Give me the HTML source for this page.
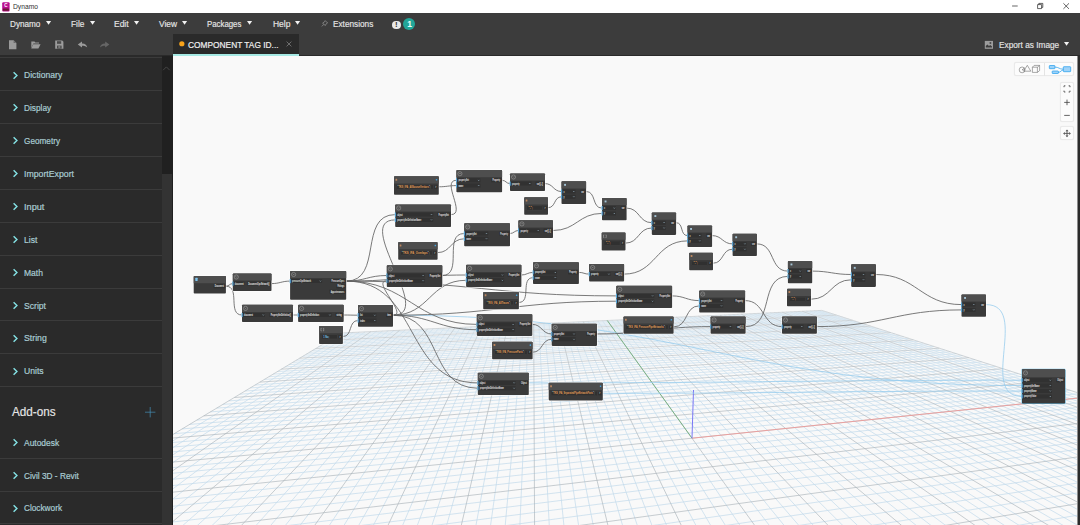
<!DOCTYPE html><html lang="en"><head><meta charset="utf-8"><title>Dynamo</title><style>
*{box-sizing:border-box;margin:0;padding:0}
html,body{width:1080px;height:525px;overflow:hidden;background:#f9f9f9;font-family:"Liberation Sans",sans-serif}
.t{position:absolute;white-space:nowrap;transform-origin:0 50%;display:inline-block;font-family:"Liberation Sans",sans-serif}
#app{position:relative;width:1080px;height:525px;overflow:hidden}
#titlebar{position:absolute;left:0;top:0;width:1080px;height:13px;background:#fff}
#menubar{position:absolute;left:0;top:13px;width:1080px;height:21px;background:#3c3c3c}
#toolbar{position:absolute;left:0;top:34px;width:1080px;height:22px;background:#3c3c3c;border-bottom:1px solid #2a2a2a}
#tab{position:absolute;left:173px;top:34px;width:126px;height:22px;background:#2a2a2a;border-bottom:2px solid #a6e9e4}
#sidebar{position:absolute;left:0;top:56px;width:162px;height:469px;background:#2a2a2a}
#scroll{position:absolute;left:161.5px;top:56px;width:11.5px;height:469px;background:#202020}
#thumb{position:absolute;left:161.5px;top:173.5px;width:10.8px;height:352px;background:#333}
#canvas{position:absolute;left:173px;top:56px;width:907px;height:469px;background:#f9f9f9;overflow:hidden}
#rborder{position:absolute;left:1077px;top:56px;width:3px;height:469px;background:#2b2b2b;border-left:1px solid #8c8c8c}
.sep{position:absolute;left:0;width:162px;height:1px;background:#3b3b3b}
.arr{position:absolute;width:0;height:0;border-left:2.6px solid transparent;border-right:2.6px solid transparent;border-top:3.6px solid #f4f4f4}
.box{position:absolute;background:#fcfcfc;border:1px solid #eaeaea;border-radius:2px;box-shadow:0 0 1px rgba(0,0,0,.08)}
svg{position:absolute;overflow:visible}
</style></head><body><div id="app">
<div id="canvas">
<svg style="left:-173px;top:-56px" width="1080" height="525" viewBox="0 0 1080 525" font-family="Liberation Sans, sans-serif">
<defs><linearGradient id="fog" x1="0" y1="0" x2="0" y2="1"><stop offset="0" stop-color="#f9f9f9" stop-opacity="0.32"/><stop offset="1" stop-color="#f9f9f9" stop-opacity="0"/></linearGradient><clipPath id="cv"><rect x="173" y="56" width="907" height="469"/></clipPath></defs>
<g clip-path="url(#cv)">
<path d="M-3924.3 2979.5L347.4 332.7M8273.7 2971.1L6846.6 2248.9M-3792.8 2979.4L353.4 332.4M7617.3 2971.5L5746.9 1895.1M-3661.4 2979.3L359.2 332.2M6961.0 2972.0L4973.5 1646.2M-3529.9 2979.2L365.1 331.9M6304.6 2972.4L4399.9 1461.7M-3267.0 2979.0L376.7 331.3M4991.9 2973.3L3606.0 1206.2M-3135.6 2978.9L382.5 331.1M4335.5 2973.8L3319.9 1114.2M-3004.1 2978.8L388.2 330.8M3679.1 2974.2L3082.5 1037.8M-2872.7 2978.8L393.9 330.5M3022.8 2974.7L2882.5 973.4M-2609.8 2978.6L405.3 330.0M1710.1 2975.6L2563.7 870.9M-2478.3 2978.5L410.9 329.7M1053.7 2976.0L2434.7 829.4M-2346.9 2978.4L416.5 329.5M397.3 2976.5L2321.2 792.8M-2215.4 2978.3L422.1 329.2M-259.0 2977.0L2220.4 760.4M-1952.5 2978.1L433.2 328.7M-1571.8 2977.9L2049.4 705.4M-1821.1 2978.0L438.7 328.4M-2228.1 2978.3L1976.3 681.9M-1689.6 2977.9L444.2 328.2M-2884.5 2978.8L1910.0 660.5M-1558.2 2977.8L449.7 327.9M-3540.9 2979.2L1849.4 641.1M-1295.3 2977.7L460.5 327.4M-2872.3 2267.3L1743.0 606.8M-1163.8 2977.6L465.9 327.1M-2276.3 1908.6L1696.0 591.7M-1032.4 2977.5L471.3 326.9M-1857.8 1656.7L1652.6 577.7M-900.9 2977.4L476.6 326.6M-1547.8 1470.1L1612.2 564.7M-638.0 2977.2L487.2 326.1M-1119.4 1212.2L1539.7 541.4M-506.6 2977.1L492.5 325.9M-965.1 1119.4L1506.9 530.8M-375.1 2977.0L497.7 325.6M-837.2 1042.4L1476.2 521.0M-243.7 2976.9L502.9 325.4M-729.4 977.5L1447.4 511.7M19.2 2976.8L513.3 324.9M-557.8 874.2L1394.8 494.8M150.7 2976.7L518.4 324.7M-488.3 832.4L1370.7 487.0M282.2 2976.6L523.5 324.4M-427.2 795.7L1347.9 479.7M413.6 2976.5L528.6 324.2M-373.0 763.0L1326.3 472.7M676.5 2976.3L538.8 323.7M-281.0 707.7L1286.4 459.9M808.0 2976.2L543.8 323.5M-241.7 684.0L1267.9 454.0M939.4 2976.1L548.8 323.2M-206.0 662.5L1250.3 448.3M1070.9 2976.0L553.8 323.0M-173.5 643.0L1233.6 442.9M1333.8 2975.9L563.7 322.5M-116.3 608.5L1202.2 432.8M1465.2 2975.8L568.7 322.3M-91.0 593.3L1187.6 428.1M1596.7 2975.7L573.6 322.1M-67.7 579.3L1173.6 423.6M1728.1 2975.6L578.4 321.8M-46.0 566.2L1160.2 419.3M1991.0 2975.4L588.1 321.4M-7.0 542.7L1135.0 411.2M2122.5 2975.3L593.0 321.2M10.6 532.2L1123.1 407.4M2253.9 2975.2L597.8 320.9M27.1 522.2L1111.7 403.7M2385.4 2975.1L602.5 320.7M42.6 512.9L1100.8 400.2M2648.3 2974.9L612.0 320.3M70.8 495.9L1080.0 393.5M2779.7 2974.9L616.8 320.0M83.8 488.1L1070.2 390.3M2911.2 2974.8L621.5 319.8M96.0 480.7L1060.8 387.3M3042.6 2974.7L626.1 319.6M107.6 473.8L1051.6 384.4M3305.5 2974.5L635.4 319.2M129.0 460.9L1034.3 378.8M3437.0 2974.4L640.0 318.9M139.0 454.9L1026.0 376.1M3568.4 2974.3L644.6 318.7M148.4 449.2L1018.0 373.6M3699.9 2974.2L649.2 318.5M157.4 443.8L1010.3 371.1M3962.8 2974.0L658.3 318.1M174.2 433.7L995.6 366.3M4094.2 2974.0L662.9 317.9M182.1 428.9L988.6 364.1M4225.7 2973.9L667.4 317.7M189.6 424.4L981.7 361.9M4357.1 2973.8L671.8 317.5M196.8 420.1L975.1 359.7M4620.0 2973.6L680.8 317.0M210.4 411.9L962.4 355.7M4751.5 2973.5L685.2 316.8M216.7 408.1L956.4 353.7M4882.9 2973.4L689.6 316.6M222.8 404.4L950.5 351.8M5014.4 2973.3L694.0 316.4M228.7 400.9L944.7 350.0M5277.3 2973.1L702.7 316.0M239.9 394.2L933.7 346.4M5408.7 2973.0L707.1 315.8M245.1 391.0L928.4 344.7M5540.2 2973.0L711.4 315.6M250.2 387.9L923.3 343.1M5671.6 2972.9L715.7 315.4M255.1 385.0L918.3 341.4M5934.5 2972.7L724.2 315.0M264.4 379.4L908.6 338.3M6066.0 2972.6L728.5 314.8M268.9 376.7L904.0 336.8M6197.4 2972.5L732.7 314.6M273.1 374.1L899.4 335.4M6328.9 2972.4L737.0 314.4M277.3 371.6L895.0 334.0M6591.8 2972.2L745.3 314.0M285.2 366.9L886.5 331.2M6723.2 2972.1L749.5 313.8M289.0 364.6L882.4 329.9M6854.7 2972.1L753.7 313.6M292.6 362.4L878.3 328.6M6986.1 2972.0L757.8 313.4M296.2 360.3L874.4 327.3M7249.0 2971.8L766.0 313.0M303.0 356.2L866.8 324.9M7380.5 2971.7L770.1 312.8M306.3 354.2L863.1 323.7M7511.9 2971.6L774.2 312.6M309.4 352.3L859.5 322.5M7643.4 2971.5L778.2 312.5M312.5 350.4L856.0 321.4M7906.3 2971.3L786.3 312.1M318.4 346.9L849.2 319.2M8037.7 2971.2L790.3 311.9M321.2 345.2L845.9 318.2M8169.2 2971.1L794.3 311.7M324.0 343.5L842.7 317.1M8300.6 2971.1L798.3 311.5M326.7 341.9L839.5 316.1M8563.5 2970.9L806.2 311.1M331.9 338.8L833.4 314.1M8695.0 2970.8L810.1 311.0M334.4 337.3L830.4 313.2M8826.4 2970.7L814.0 310.8M336.8 335.8L827.5 312.2M8857.0 2937.6L817.9 310.6M339.2 334.4L824.6 311.3" stroke="#c2daeb" stroke-width="0.7" fill="none"/>
<path d="M-4055.7 2979.6L341.5 333.0M8930.1 2970.6L8534.3 2791.9M-3398.5 2979.1L370.9 331.6M5648.2 2972.9L3957.5 1319.3M-2741.2 2978.7L399.6 330.3M2366.4 2975.1L2711.5 918.4M-2084.0 2978.2L427.7 328.9M-915.4 2977.4L2130.4 731.4M-1426.7 2977.8L455.1 327.6M-3789.3 2819.2L1794.0 623.2M-769.5 2977.3L481.9 326.4M-1309.0 1326.4L1574.7 552.6M-112.2 2976.9L508.1 325.2M-637.3 922.1L1420.3 503.0M545.1 2976.4L533.7 323.9M-324.6 733.9L1305.9 466.2M1202.3 2975.9L558.8 322.8M-143.7 625.0L1217.5 437.7M1859.6 2975.5L583.3 321.6M-25.8 554.1L1147.3 415.2M2516.8 2975.0L607.3 320.5M57.1 504.2L1090.2 396.8M3174.1 2974.6L630.8 319.4M118.6 467.1L1042.8 381.5M3831.3 2974.1L653.8 318.3M166.0 438.6L1002.8 368.7M4488.6 2973.7L676.3 317.2M203.7 415.9L968.7 357.7M5145.8 2973.2L698.4 316.2M234.4 397.5L939.2 348.2M5803.1 2972.8L720.0 315.2M259.9 382.1L913.4 339.9M6460.3 2972.3L741.2 314.2M281.3 369.2L890.7 332.6M7117.6 2971.9L761.9 313.2M299.6 358.2L870.6 326.1M7774.8 2971.4L782.3 312.3M315.5 348.6L852.6 320.3M8432.1 2971.0L802.2 311.3M329.3 340.3L836.4 315.1M8534.3 2791.9L821.8 310.4M341.5 333.0L821.8 310.4" stroke="#aab4ba" stroke-width="0.65" fill="none"/>
<rect x="173" y="300" width="907" height="125" fill="url(#fog)"/>
<path d="M692.0 438.2L1090.2 396.8" stroke="#f29492" stroke-width="0.8"/>
<path d="M692.0 438.2L607.3 320.5" stroke="#66aa70" stroke-width="0.8"/>
<path d="M692.0 438.2L693.5 390" stroke="#7a78f5" stroke-width="1"/>
<path d="M528.8 382.9C750.7 382.9 800.1 380.2 1022.0 380.2M393.0 315.2C677.8 315.2 737.2 385.6 1022.0 385.6M602.8 393.3C791.4 393.3 833.4 391.0 1022.0 391.0M986.0 304.6C1030.4 304.6 977.6 396.4 1022.0 396.4" stroke="#98cdee" stroke-width="0.8" fill="none"/>
<path d="M225.9 286.2C229.2 286.2 229.5 283.6 232.8 283.6M225.9 286.2C240.7 286.2 227.2 315.0 242.0 315.0M271.5 283.6C279.9 283.6 281.7 281.1 290.1 281.1M293.0 315.0C295.3 315.0 295.8 315.0 298.1 315.0M343.7 315.0C350.1 315.0 351.6 315.2 358.0 315.2M342.9 336.5C352.8 336.5 348.1 320.5 358.0 320.5M438.8 186.8C446.7 186.8 448.5 185.6 456.4 185.6M451.0 214.6C466.6 214.6 440.8 180.3 456.4 180.3M502.1 180.3C506.0 180.3 506.1 183.6 510.0 183.6M545.0 183.6C553.2 183.6 553.3 191.5 561.5 191.5M548.0 207.7C555.8 207.7 553.7 196.8 561.5 196.8M586.1 191.5C596.4 191.5 591.7 208.1 602.0 208.1M553.0 230.5C576.4 230.5 578.6 213.4 602.0 213.4M437.6 252.6C451.1 252.6 450.7 238.8 464.2 238.8M442.3 275.5C463.6 275.5 442.9 233.5 464.2 233.5M510.0 233.5C514.0 233.5 514.4 230.5 518.4 230.5M626.6 208.1C639.7 208.1 638.7 222.7 651.8 222.7M625.5 243.1C639.1 243.1 638.2 228.0 651.8 228.0M676.1 222.7C683.8 222.7 679.8 235.6 687.5 235.6M624.1 274.1C656.3 274.1 655.3 240.9 687.5 240.9M712.1 235.6C722.1 235.6 722.6 243.9 732.6 243.9M713.0 263.2C723.8 263.2 721.8 249.2 732.6 249.2M756.9 243.9C775.5 243.9 769.3 271.1 787.9 271.1M745.6 326.6C775.1 326.6 758.4 276.4 787.9 276.4M812.2 271.1C829.8 271.1 833.6 274.5 851.2 274.5M811.0 299.2C831.1 299.2 831.1 279.8 851.2 279.8M875.9 274.5C916.7 274.5 920.7 304.6 961.5 304.6M816.9 326.6C882.4 326.6 896.0 309.9 961.5 309.9M745.1 300.6C765.4 300.6 761.7 326.6 782.0 326.6M521.4 275.0C526.7 275.0 527.7 272.4 533.0 272.4M518.9 302.4C531.7 302.4 520.2 277.7 533.0 277.7M578.9 272.4C583.6 272.4 584.4 274.1 589.1 274.1M672.1 295.9C684.5 295.9 686.8 300.6 699.2 300.6M673.6 326.9C688.5 326.9 684.3 305.9 699.2 305.9M532.3 324.4C542.0 324.4 542.0 334.0 551.7 334.0M532.6 352.2C543.0 352.2 541.3 339.3 551.7 339.3M597.0 334.0C648.2 334.0 659.4 326.6 710.6 326.6M346.2 281.1C383.4 281.1 358.0 214.6 395.2 214.6M346.2 281.1C364.6 281.1 368.4 275.5 386.8 275.5M346.2 281.1C400.2 281.1 412.1 275.0 466.1 275.0M346.2 281.1C467.9 281.1 494.6 295.9 616.3 295.9M346.2 281.1C408.1 281.1 414.9 324.4 476.8 324.4M346.2 281.1C421.1 281.1 402.9 382.9 477.8 382.9M393.0 315.2C435.9 315.2 352.3 219.9 395.2 219.9M393.0 315.2C408.7 315.2 371.1 280.8 386.8 280.8M393.0 315.2C429.5 315.2 429.6 280.3 466.1 280.3M393.0 315.2C493.7 315.2 515.6 301.2 616.3 301.2M393.0 315.2C431.3 315.2 438.5 329.7 476.8 329.7M393.0 315.2C443.4 315.2 427.4 388.2 477.8 388.2" stroke="#626262" stroke-width="0.85" fill="none"/>
<g>
<rect x="193.2" y="275.5" width="33.2" height="18.5" rx="1.1" fill="#ffffff"/>
<rect x="193.7" y="276.0" width="32.2" height="17.5" rx="0.8" fill="#3a3a3a"/>
<path d="M193.7 283.2V276.8a0.8 0.8 0 0 1 0.8 -0.8H225.1a0.8 0.8 0 0 1 0.8 0.8V283.2z" fill="#4e4e4e"/>
<rect x="195.3" y="277.7" width="2.3" height="3.4" rx="0.5" fill="#7cc4ee"/>
<rect x="213.6" y="284.2" width="11.7" height="4.0" rx="0.6" fill="#313131"/>
<text x="223.90" y="287.20" font-size="2.55" fill="#ececec" text-anchor="end" font-weight="bold" textLength="9.10" lengthAdjust="spacingAndGlyphs">Document</text>
</g>
<g>
<rect x="232.3" y="272.9" width="39.7" height="18.6" rx="1.1" fill="#ffffff"/>
<rect x="232.8" y="273.4" width="38.7" height="17.6" rx="0.8" fill="#3a3a3a"/>
<path d="M232.8 280.6V274.2a0.8 0.8 0 0 1 0.8 -0.8H270.7a0.8 0.8 0 0 1 0.8 0.8V280.6z" fill="#4e4e4e"/>
<circle cx="236.3" cy="277.0" r="2.1" fill="none" stroke="#d0d0d0" stroke-width="0.35"/>
<path d="M235.4 276.4l0.9 0.9l0.9 -0.9" fill="none" stroke="#d0d0d0" stroke-width="0.35"/>
<rect x="232.8" y="281.6" width="11.5" height="4.0" rx="0.5" fill="#313131"/>
<rect x="232.4" y="281.5" width="1.1" height="4.2" fill="#55a9dc"/>
<text x="234.80" y="284.60" font-size="2.55" fill="#ececec" text-anchor="start" font-weight="bold" textLength="8.89" lengthAdjust="spacingAndGlyphs">document</text>
<rect x="247.0" y="281.6" width="23.9" height="4.0" rx="0.6" fill="#313131"/>
<text x="269.50" y="284.60" font-size="2.55" fill="#ececec" text-anchor="end" font-weight="bold" textLength="21.30" lengthAdjust="spacingAndGlyphs">DocumentOpsNetwork[]</text>
</g>
<g>
<rect x="289.6" y="270.4" width="57.1" height="29.8" rx="1.1" fill="#ffffff"/>
<rect x="290.1" y="270.9" width="56.1" height="28.8" rx="0.8" fill="#3a3a3a"/>
<path d="M290.1 278.1V271.7a0.8 0.8 0 0 1 0.8 -0.8H345.4a0.8 0.8 0 0 1 0.8 0.8V278.1z" fill="#4e4e4e"/>
<circle cx="293.6" cy="274.5" r="2.1" fill="none" stroke="#d0d0d0" stroke-width="0.35"/>
<path d="M292.7 273.9l0.9 0.9l0.9 -0.9" fill="none" stroke="#d0d0d0" stroke-width="0.35"/>
<rect x="290.1" y="279.1" width="32.0" height="4.0" rx="0.5" fill="#313131"/>
<rect x="289.7" y="279.0" width="1.1" height="4.2" fill="#55a9dc"/>
<text x="292.10" y="282.10" font-size="2.55" fill="#ececec" text-anchor="start" font-weight="bold" textLength="18.83" lengthAdjust="spacingAndGlyphs">pressureOpsNetwork</text>
<path d="M319.8 280.7l0.6 0.7l0.6 -0.7" fill="none" stroke="#b4d6ea" stroke-width="0.5"/>
<rect x="330.4" y="279.1" width="15.2" height="4.0" rx="0.6" fill="#313131"/>
<text x="344.20" y="282.10" font-size="2.55" fill="#ececec" text-anchor="end" font-weight="bold" textLength="12.62" lengthAdjust="spacingAndGlyphs">PressureOpes</text>
<rect x="336.3" y="284.4" width="9.3" height="4.0" rx="0.6" fill="#313131"/>
<text x="344.20" y="287.40" font-size="2.55" fill="#ececec" text-anchor="end" font-weight="bold" textLength="6.72" lengthAdjust="spacingAndGlyphs">Fittings</text>
<rect x="329.5" y="289.7" width="16.1" height="4.0" rx="0.6" fill="#313131"/>
<text x="344.20" y="292.70" font-size="2.55" fill="#ececec" text-anchor="end" font-weight="bold" textLength="13.55" lengthAdjust="spacingAndGlyphs">Appurtenances</text>
</g>
<g>
<rect x="241.5" y="304.3" width="52.0" height="18.2" rx="1.1" fill="#ffffff"/>
<rect x="242.0" y="304.8" width="51.0" height="17.2" rx="0.8" fill="#3a3a3a"/>
<path d="M242.0 312.0V305.6a0.8 0.8 0 0 1 0.8 -0.8H292.2a0.8 0.8 0 0 1 0.8 0.8V312.0z" fill="#4e4e4e"/>
<circle cx="245.5" cy="308.4" r="2.1" fill="none" stroke="#d0d0d0" stroke-width="0.35"/>
<path d="M244.6 307.8l0.9 0.9l0.9 -0.9" fill="none" stroke="#d0d0d0" stroke-width="0.35"/>
<rect x="242.0" y="313.0" width="23.0" height="4.0" rx="0.5" fill="#313131"/>
<rect x="241.6" y="312.9" width="1.1" height="4.2" fill="#55a9dc"/>
<text x="244.00" y="316.00" font-size="2.55" fill="#ececec" text-anchor="start" font-weight="bold" textLength="8.89" lengthAdjust="spacingAndGlyphs">document</text>
<path d="M262.7 314.6l0.6 0.7l0.6 -0.7" fill="none" stroke="#b4d6ea" stroke-width="0.5"/>
<rect x="269.4" y="313.0" width="23.0" height="4.0" rx="0.6" fill="#313131"/>
<text x="291.00" y="316.00" font-size="2.55" fill="#ececec" text-anchor="end" font-weight="bold" textLength="20.37" lengthAdjust="spacingAndGlyphs">PropertySetDefinition[]</text>
</g>
<g>
<rect x="297.6" y="304.3" width="46.6" height="18.2" rx="1.1" fill="#ffffff"/>
<rect x="298.1" y="304.8" width="45.6" height="17.2" rx="0.8" fill="#3a3a3a"/>
<path d="M298.1 312.0V305.6a0.8 0.8 0 0 1 0.8 -0.8H342.9a0.8 0.8 0 0 1 0.8 0.8V312.0z" fill="#4e4e4e"/>
<circle cx="301.6" cy="308.4" r="2.1" fill="none" stroke="#d0d0d0" stroke-width="0.35"/>
<path d="M300.7 307.8l0.9 0.9l0.9 -0.9" fill="none" stroke="#d0d0d0" stroke-width="0.35"/>
<rect x="298.1" y="313.0" width="33.5" height="4.0" rx="0.5" fill="#313131"/>
<rect x="297.7" y="312.9" width="1.1" height="4.2" fill="#55a9dc"/>
<text x="300.10" y="316.00" font-size="2.55" fill="#ececec" text-anchor="start" font-weight="bold" textLength="19.03" lengthAdjust="spacingAndGlyphs">propertySetDefinition</text>
<path d="M329.3 314.6l0.6 0.7l0.6 -0.7" fill="none" stroke="#b4d6ea" stroke-width="0.5"/>
<rect x="335.3" y="313.0" width="7.8" height="4.0" rx="0.6" fill="#313131"/>
<text x="341.70" y="316.00" font-size="2.55" fill="#ececec" text-anchor="end" font-weight="bold" textLength="5.17" lengthAdjust="spacingAndGlyphs">string</text>
</g>
<g>
<rect x="318.6" y="325.5" width="24.8" height="19.0" rx="1.1" fill="#ffffff"/>
<rect x="319.1" y="326.0" width="23.8" height="18.0" rx="0.8" fill="#3a3a3a"/>
<path d="M319.1 333.2V326.8a0.8 0.8 0 0 1 0.8 -0.8H342.1a0.8 0.8 0 0 1 0.8 0.8V333.2z" fill="#4e4e4e"/>
<path d="M321.7 328.3h-0.8v2.6h0.8 M322.9 328.3h0.8v2.6h-0.8" fill="none" stroke="#cfcfcf" stroke-width="0.4"/>
<rect x="321.5" y="334.5" width="16.0" height="4.4" rx="0.5" fill="#303030" stroke="#4b4b4b" stroke-width="0.3"/>
<text x="323.30" y="337.60" font-size="2.55" fill="#7cc4ee" font-weight="bold" textLength="6.00" lengthAdjust="spacingAndGlyphs">1 No;</text>
<rect x="338.3" y="335.0" width="3.4" height="3.4" rx="0.3" fill="#2f2f2f"/>
<text x="340.00" y="337.60" font-size="2.55" fill="#ddd" text-anchor="middle" font-weight="bold" textLength="1.09" lengthAdjust="spacingAndGlyphs">&gt;</text>
</g>
<g>
<rect x="357.5" y="304.5" width="36.0" height="22.8" rx="1.1" fill="#ffffff"/>
<rect x="358.0" y="305.0" width="35.0" height="21.8" rx="0.8" fill="#3a3a3a"/>
<path d="M358.0 312.2V305.8a0.8 0.8 0 0 1 0.8 -0.8H392.2a0.8 0.8 0 0 1 0.8 0.8V312.2z" fill="#4e4e4e"/>
<circle cx="361.5" cy="308.6" r="2.1" fill="none" stroke="#d0d0d0" stroke-width="0.35"/>
<path d="M360.6 308.0l0.9 0.9l0.9 -0.9" fill="none" stroke="#d0d0d0" stroke-width="0.35"/>
<rect x="358.0" y="313.2" width="18.5" height="4.0" rx="0.5" fill="#313131"/>
<rect x="357.6" y="313.1" width="1.1" height="4.2" fill="#55a9dc"/>
<text x="360.00" y="316.20" font-size="2.55" fill="#ececec" text-anchor="start" font-weight="bold" textLength="2.69" lengthAdjust="spacingAndGlyphs">list</text>
<path d="M374.2 314.8l0.6 0.7l0.6 -0.7" fill="none" stroke="#b4d6ea" stroke-width="0.5"/>
<rect x="358.0" y="318.5" width="18.5" height="4.0" rx="0.5" fill="#313131"/>
<rect x="357.6" y="318.4" width="1.1" height="4.2" fill="#55a9dc"/>
<text x="360.00" y="321.50" font-size="2.55" fill="#ececec" text-anchor="start" font-weight="bold" textLength="4.86" lengthAdjust="spacingAndGlyphs">index</text>
<path d="M374.2 320.1l0.6 0.7l0.6 -0.7" fill="none" stroke="#b4d6ea" stroke-width="0.5"/>
<rect x="386.0" y="313.2" width="6.4" height="4.0" rx="0.6" fill="#313131"/>
<text x="391.00" y="316.20" font-size="2.55" fill="#ececec" text-anchor="end" font-weight="bold" textLength="3.83" lengthAdjust="spacingAndGlyphs">item</text>
</g>
<g>
<rect x="393.5" y="175.8" width="45.8" height="19.4" rx="1.1" fill="#ffffff"/>
<rect x="394.0" y="176.3" width="44.8" height="18.4" rx="0.8" fill="#3a3a3a"/>
<path d="M394.0 183.5V177.1a0.8 0.8 0 0 1 0.8 -0.8H438.0a0.8 0.8 0 0 1 0.8 0.8V183.5z" fill="#4e4e4e"/>
<rect x="395.5" y="178.7" width="1.7" height="2.0" rx="0.3" fill="#c98d62" opacity="0.9"/>
<rect x="435.8" y="178.9" width="1.5" height="1.6" rx="0.4" fill="#45a0d8"/>
<rect x="396.4" y="184.8" width="37.0" height="4.4" rx="0.5" fill="#303030" stroke="#4b4b4b" stroke-width="0.3"/>
<text x="397.60" y="187.90" font-size="2.55" fill="#e6a05a" font-weight="bold" textLength="33.20" lengthAdjust="spacingAndGlyphs"><tspan fill="#9fc0d0">&quot;</tspan>TKS_IFA_AllSourceVertices<tspan fill="#a9bcc6">&quot;;</tspan></text>
<rect x="434.2" y="185.3" width="3.4" height="3.4" rx="0.3" fill="#2f2f2f"/>
<text x="435.90" y="187.90" font-size="2.55" fill="#ddd" text-anchor="middle" font-weight="bold" textLength="1.09" lengthAdjust="spacingAndGlyphs">&gt;</text>
</g>
<g>
<rect x="455.9" y="169.6" width="46.7" height="23.1" rx="1.1" fill="#ffffff"/>
<rect x="456.4" y="170.1" width="45.7" height="22.1" rx="0.8" fill="#3a3a3a"/>
<path d="M456.4 177.3V170.9a0.8 0.8 0 0 1 0.8 -0.8H501.3a0.8 0.8 0 0 1 0.8 0.8V177.3z" fill="#4e4e4e"/>
<circle cx="459.9" cy="173.7" r="2.1" fill="none" stroke="#d0d0d0" stroke-width="0.35"/>
<path d="M459.0 173.1l0.9 0.9l0.9 -0.9" fill="none" stroke="#d0d0d0" stroke-width="0.35"/>
<rect x="456.4" y="178.3" width="24.0" height="4.0" rx="0.5" fill="#313131"/>
<rect x="456.0" y="178.2" width="1.1" height="4.2" fill="#55a9dc"/>
<text x="458.40" y="181.30" font-size="2.55" fill="#ececec" text-anchor="start" font-weight="bold" textLength="10.45" lengthAdjust="spacingAndGlyphs">propertySet</text>
<path d="M478.1 179.9l0.6 0.7l0.6 -0.7" fill="none" stroke="#b4d6ea" stroke-width="0.5"/>
<rect x="456.4" y="183.6" width="24.0" height="4.0" rx="0.5" fill="#313131"/>
<rect x="456.0" y="183.5" width="1.1" height="4.2" fill="#55a9dc"/>
<text x="458.40" y="186.60" font-size="2.55" fill="#ececec" text-anchor="start" font-weight="bold" textLength="4.86" lengthAdjust="spacingAndGlyphs">name</text>
<path d="M478.1 185.2l0.6 0.7l0.6 -0.7" fill="none" stroke="#b4d6ea" stroke-width="0.5"/>
<rect x="491.2" y="178.3" width="10.3" height="4.0" rx="0.6" fill="#313131"/>
<text x="500.10" y="181.30" font-size="2.55" fill="#ececec" text-anchor="end" font-weight="bold" textLength="7.65" lengthAdjust="spacingAndGlyphs">Property</text>
</g>
<g>
<rect x="509.5" y="172.9" width="36.0" height="18.6" rx="1.1" fill="#ffffff"/>
<rect x="510.0" y="173.4" width="35.0" height="17.6" rx="0.8" fill="#3a3a3a"/>
<path d="M510.0 180.6V174.2a0.8 0.8 0 0 1 0.8 -0.8H544.2a0.8 0.8 0 0 1 0.8 0.8V180.6z" fill="#4e4e4e"/>
<circle cx="513.5" cy="177.0" r="2.1" fill="none" stroke="#d0d0d0" stroke-width="0.35"/>
<path d="M512.6 176.4l0.9 0.9l0.9 -0.9" fill="none" stroke="#d0d0d0" stroke-width="0.35"/>
<rect x="510.0" y="181.6" width="21.5" height="4.0" rx="0.5" fill="#313131"/>
<rect x="509.6" y="181.5" width="1.1" height="4.2" fill="#55a9dc"/>
<text x="512.00" y="184.60" font-size="2.55" fill="#ececec" text-anchor="start" font-weight="bold" textLength="7.55" lengthAdjust="spacingAndGlyphs">property</text>
<path d="M529.2 183.2l0.6 0.7l0.6 -0.7" fill="none" stroke="#b4d6ea" stroke-width="0.5"/>
<rect x="535.5" y="181.6" width="8.9" height="4.0" rx="0.6" fill="#313131"/>
<text x="543.00" y="184.60" font-size="2.55" fill="#ececec" text-anchor="end" font-weight="bold" textLength="6.31" lengthAdjust="spacingAndGlyphs">var[]..[]</text>
</g>
<g>
<rect x="523.7" y="196.7" width="24.8" height="18.6" rx="1.1" fill="#ffffff"/>
<rect x="524.2" y="197.2" width="23.8" height="17.6" rx="0.8" fill="#3a3a3a"/>
<path d="M524.2 204.4V198.0a0.8 0.8 0 0 1 0.8 -0.8H547.2a0.8 0.8 0 0 1 0.8 0.8V204.4z" fill="#4e4e4e"/>
<rect x="525.7" y="199.6" width="1.7" height="2.0" rx="0.3" fill="#c98d62" opacity="0.9"/>
<rect x="526.6" y="205.7" width="16.0" height="4.4" rx="0.5" fill="#303030" stroke="#4b4b4b" stroke-width="0.3"/>
<text x="528.40" y="208.80" font-size="2.55" fill="#e6a05a" font-weight="bold" textLength="4.40" lengthAdjust="spacingAndGlyphs">&quot;-&quot;;</text>
<rect x="543.4" y="206.2" width="3.4" height="3.4" rx="0.3" fill="#2f2f2f"/>
<text x="545.10" y="208.80" font-size="2.55" fill="#ddd" text-anchor="middle" font-weight="bold" textLength="1.09" lengthAdjust="spacingAndGlyphs">&gt;</text>
</g>
<g>
<rect x="394.7" y="203.9" width="56.8" height="23.6" rx="1.1" fill="#ffffff"/>
<rect x="395.2" y="204.4" width="55.8" height="22.6" rx="0.8" fill="#3a3a3a"/>
<path d="M395.2 211.6V205.2a0.8 0.8 0 0 1 0.8 -0.8H450.2a0.8 0.8 0 0 1 0.8 0.8V211.6z" fill="#4e4e4e"/>
<circle cx="398.7" cy="208.0" r="2.1" fill="none" stroke="#d0d0d0" stroke-width="0.35"/>
<path d="M397.8 207.4l0.9 0.9l0.9 -0.9" fill="none" stroke="#d0d0d0" stroke-width="0.35"/>
<rect x="395.2" y="212.6" width="38.0" height="4.0" rx="0.5" fill="#313131"/>
<rect x="394.8" y="212.5" width="1.1" height="4.2" fill="#55a9dc"/>
<text x="397.20" y="215.60" font-size="2.55" fill="#ececec" text-anchor="start" font-weight="bold" textLength="5.48" lengthAdjust="spacingAndGlyphs">object</text>
<path d="M430.9 214.2l0.6 0.7l0.6 -0.7" fill="none" stroke="#b4d6ea" stroke-width="0.5"/>
<rect x="395.2" y="217.9" width="38.0" height="4.0" rx="0.5" fill="#313131"/>
<rect x="394.8" y="217.8" width="1.1" height="4.2" fill="#55a9dc"/>
<text x="397.20" y="220.90" font-size="2.55" fill="#ececec" text-anchor="start" font-weight="bold" textLength="24.10" lengthAdjust="spacingAndGlyphs">propertySetDefinitionName</text>
<path d="M430.9 219.5l0.6 0.7l0.6 -0.7" fill="none" stroke="#b4d6ea" stroke-width="0.5"/>
<rect x="437.2" y="212.6" width="13.2" height="4.0" rx="0.6" fill="#313131"/>
<text x="449.00" y="215.60" font-size="2.55" fill="#ececec" text-anchor="end" font-weight="bold" textLength="10.55" lengthAdjust="spacingAndGlyphs">PropertySet</text>
</g>
<g>
<rect x="463.7" y="222.8" width="46.8" height="24.0" rx="1.1" fill="#ffffff"/>
<rect x="464.2" y="223.3" width="45.8" height="23.0" rx="0.8" fill="#3a3a3a"/>
<path d="M464.2 230.5V224.1a0.8 0.8 0 0 1 0.8 -0.8H509.2a0.8 0.8 0 0 1 0.8 0.8V230.5z" fill="#4e4e4e"/>
<circle cx="467.7" cy="226.9" r="2.1" fill="none" stroke="#d0d0d0" stroke-width="0.35"/>
<path d="M466.8 226.3l0.9 0.9l0.9 -0.9" fill="none" stroke="#d0d0d0" stroke-width="0.35"/>
<rect x="464.2" y="231.5" width="24.0" height="4.0" rx="0.5" fill="#313131"/>
<rect x="463.8" y="231.4" width="1.1" height="4.2" fill="#55a9dc"/>
<text x="466.20" y="234.50" font-size="2.55" fill="#ececec" text-anchor="start" font-weight="bold" textLength="10.45" lengthAdjust="spacingAndGlyphs">propertySet</text>
<path d="M485.9 233.1l0.6 0.7l0.6 -0.7" fill="none" stroke="#b4d6ea" stroke-width="0.5"/>
<rect x="464.2" y="236.8" width="24.0" height="4.0" rx="0.5" fill="#313131"/>
<rect x="463.8" y="236.7" width="1.1" height="4.2" fill="#55a9dc"/>
<text x="466.20" y="239.80" font-size="2.55" fill="#ececec" text-anchor="start" font-weight="bold" textLength="4.86" lengthAdjust="spacingAndGlyphs">name</text>
<path d="M485.9 238.4l0.6 0.7l0.6 -0.7" fill="none" stroke="#b4d6ea" stroke-width="0.5"/>
<rect x="499.1" y="231.5" width="10.3" height="4.0" rx="0.6" fill="#313131"/>
<text x="508.00" y="234.50" font-size="2.55" fill="#ececec" text-anchor="end" font-weight="bold" textLength="7.65" lengthAdjust="spacingAndGlyphs">Property</text>
</g>
<g>
<rect x="517.9" y="219.8" width="35.6" height="18.7" rx="1.1" fill="#ffffff"/>
<rect x="518.4" y="220.3" width="34.6" height="17.7" rx="0.8" fill="#3a3a3a"/>
<path d="M518.4 227.5V221.1a0.8 0.8 0 0 1 0.8 -0.8H552.2a0.8 0.8 0 0 1 0.8 0.8V227.5z" fill="#4e4e4e"/>
<circle cx="521.9" cy="223.9" r="2.1" fill="none" stroke="#d0d0d0" stroke-width="0.35"/>
<path d="M521.0 223.3l0.9 0.9l0.9 -0.9" fill="none" stroke="#d0d0d0" stroke-width="0.35"/>
<rect x="518.4" y="228.5" width="21.5" height="4.0" rx="0.5" fill="#313131"/>
<rect x="518.0" y="228.4" width="1.1" height="4.2" fill="#55a9dc"/>
<text x="520.40" y="231.50" font-size="2.55" fill="#ececec" text-anchor="start" font-weight="bold" textLength="7.55" lengthAdjust="spacingAndGlyphs">property</text>
<path d="M537.6 230.1l0.6 0.7l0.6 -0.7" fill="none" stroke="#b4d6ea" stroke-width="0.5"/>
<rect x="543.5" y="228.5" width="8.9" height="4.0" rx="0.6" fill="#313131"/>
<text x="551.00" y="231.50" font-size="2.55" fill="#ececec" text-anchor="end" font-weight="bold" textLength="6.31" lengthAdjust="spacingAndGlyphs">var[]..[]</text>
</g>
<g>
<rect x="397.7" y="241.6" width="40.4" height="18.6" rx="1.1" fill="#ffffff"/>
<rect x="398.2" y="242.1" width="39.4" height="17.6" rx="0.8" fill="#3a3a3a"/>
<path d="M398.2 249.3V242.9a0.8 0.8 0 0 1 0.8 -0.8H436.8a0.8 0.8 0 0 1 0.8 0.8V249.3z" fill="#4e4e4e"/>
<rect x="399.7" y="244.5" width="1.7" height="2.0" rx="0.3" fill="#c98d62" opacity="0.9"/>
<rect x="434.6" y="244.7" width="1.5" height="1.6" rx="0.4" fill="#45a0d8"/>
<rect x="400.6" y="250.6" width="31.6" height="4.4" rx="0.5" fill="#303030" stroke="#4b4b4b" stroke-width="0.3"/>
<text x="401.80" y="253.70" font-size="2.55" fill="#e6a05a" font-weight="bold" textLength="27.80" lengthAdjust="spacingAndGlyphs"><tspan fill="#9fc0d0">&quot;</tspan>TKS_IFA_Overlaps<tspan fill="#a9bcc6">&quot;;</tspan></text>
<rect x="433.0" y="251.1" width="3.4" height="3.4" rx="0.3" fill="#2f2f2f"/>
<text x="434.70" y="253.70" font-size="2.55" fill="#ddd" text-anchor="middle" font-weight="bold" textLength="1.09" lengthAdjust="spacingAndGlyphs">&gt;</text>
</g>
<g>
<rect x="561.0" y="180.8" width="25.6" height="23.8" rx="1.1" fill="#ffffff"/>
<rect x="561.5" y="181.3" width="24.6" height="22.8" rx="0.8" fill="#3a3a3a"/>
<path d="M561.5 188.5V182.1a0.8 0.8 0 0 1 0.8 -0.8H585.3a0.8 0.8 0 0 1 0.8 0.8V188.5z" fill="#4e4e4e"/>
<rect x="564.1" y="183.9" width="1.9" height="1.9" fill="#b4d9ee" opacity="0.85"/>
<rect x="561.5" y="189.5" width="14.0" height="4.0" rx="0.5" fill="#313131"/>
<rect x="561.1" y="189.4" width="1.1" height="4.2" fill="#55a9dc"/>
<text x="563.50" y="192.50" font-size="2.55" fill="#ececec" text-anchor="start" font-weight="bold" textLength="1.04" lengthAdjust="spacingAndGlyphs">x</text>
<path d="M573.2 191.1l0.6 0.7l0.6 -0.7" fill="none" stroke="#b4d6ea" stroke-width="0.5"/>
<rect x="561.5" y="194.8" width="14.0" height="4.0" rx="0.5" fill="#313131"/>
<rect x="561.1" y="194.7" width="1.1" height="4.2" fill="#55a9dc"/>
<text x="563.50" y="197.80" font-size="2.55" fill="#ececec" text-anchor="start" font-weight="bold" textLength="1.04" lengthAdjust="spacingAndGlyphs">y</text>
<path d="M573.2 196.4l0.6 0.7l0.6 -0.7" fill="none" stroke="#b4d6ea" stroke-width="0.5"/>
<rect x="580.1" y="189.5" width="5.4" height="4.0" rx="0.6" fill="#313131"/>
<text x="584.10" y="192.50" font-size="2.55" fill="#ececec" text-anchor="end" font-weight="bold" textLength="2.79" lengthAdjust="spacingAndGlyphs">var</text>
</g>
<g>
<rect x="601.5" y="197.4" width="25.6" height="23.4" rx="1.1" fill="#ffffff"/>
<rect x="602.0" y="197.9" width="24.6" height="22.4" rx="0.8" fill="#3a3a3a"/>
<path d="M602.0 205.1V198.7a0.8 0.8 0 0 1 0.8 -0.8H625.8a0.8 0.8 0 0 1 0.8 0.8V205.1z" fill="#4e4e4e"/>
<rect x="604.6" y="200.5" width="1.9" height="1.9" fill="#b4d9ee" opacity="0.85"/>
<rect x="602.0" y="206.1" width="14.0" height="4.0" rx="0.5" fill="#313131"/>
<rect x="601.6" y="206.0" width="1.1" height="4.2" fill="#55a9dc"/>
<text x="604.00" y="209.10" font-size="2.55" fill="#ececec" text-anchor="start" font-weight="bold" textLength="1.04" lengthAdjust="spacingAndGlyphs">x</text>
<path d="M613.7 207.7l0.6 0.7l0.6 -0.7" fill="none" stroke="#b4d6ea" stroke-width="0.5"/>
<rect x="602.0" y="211.4" width="14.0" height="4.0" rx="0.5" fill="#313131"/>
<rect x="601.6" y="211.3" width="1.1" height="4.2" fill="#55a9dc"/>
<text x="604.00" y="214.40" font-size="2.55" fill="#ececec" text-anchor="start" font-weight="bold" textLength="1.04" lengthAdjust="spacingAndGlyphs">y</text>
<path d="M613.7 213.0l0.6 0.7l0.6 -0.7" fill="none" stroke="#b4d6ea" stroke-width="0.5"/>
<rect x="620.6" y="206.1" width="5.4" height="4.0" rx="0.6" fill="#313131"/>
<text x="624.60" y="209.10" font-size="2.55" fill="#ececec" text-anchor="end" font-weight="bold" textLength="2.79" lengthAdjust="spacingAndGlyphs">var</text>
</g>
<g>
<rect x="651.3" y="212.0" width="25.3" height="23.4" rx="1.1" fill="#ffffff"/>
<rect x="651.8" y="212.5" width="24.3" height="22.4" rx="0.8" fill="#3a3a3a"/>
<path d="M651.8 219.7V213.3a0.8 0.8 0 0 1 0.8 -0.8H675.3a0.8 0.8 0 0 1 0.8 0.8V219.7z" fill="#4e4e4e"/>
<rect x="654.4" y="215.1" width="1.9" height="1.9" fill="#b4d9ee" opacity="0.85"/>
<rect x="651.8" y="220.7" width="14.0" height="4.0" rx="0.5" fill="#313131"/>
<rect x="651.4" y="220.6" width="1.1" height="4.2" fill="#55a9dc"/>
<text x="653.80" y="223.70" font-size="2.55" fill="#ececec" text-anchor="start" font-weight="bold" textLength="1.04" lengthAdjust="spacingAndGlyphs">x</text>
<path d="M663.5 222.3l0.6 0.7l0.6 -0.7" fill="none" stroke="#b4d6ea" stroke-width="0.5"/>
<rect x="651.8" y="226.0" width="14.0" height="4.0" rx="0.5" fill="#313131"/>
<rect x="651.4" y="225.9" width="1.1" height="4.2" fill="#55a9dc"/>
<text x="653.80" y="229.00" font-size="2.55" fill="#ececec" text-anchor="start" font-weight="bold" textLength="1.04" lengthAdjust="spacingAndGlyphs">y</text>
<path d="M663.5 227.6l0.6 0.7l0.6 -0.7" fill="none" stroke="#b4d6ea" stroke-width="0.5"/>
<rect x="670.1" y="220.7" width="5.4" height="4.0" rx="0.6" fill="#313131"/>
<text x="674.10" y="223.70" font-size="2.55" fill="#ececec" text-anchor="end" font-weight="bold" textLength="2.79" lengthAdjust="spacingAndGlyphs">var</text>
</g>
<g>
<rect x="687.0" y="224.9" width="25.6" height="22.7" rx="1.1" fill="#ffffff"/>
<rect x="687.5" y="225.4" width="24.6" height="21.7" rx="0.8" fill="#3a3a3a"/>
<path d="M687.5 232.6V226.2a0.8 0.8 0 0 1 0.8 -0.8H711.3a0.8 0.8 0 0 1 0.8 0.8V232.6z" fill="#4e4e4e"/>
<rect x="690.1" y="228.0" width="1.9" height="1.9" fill="#b4d9ee" opacity="0.85"/>
<rect x="687.5" y="233.6" width="14.0" height="4.0" rx="0.5" fill="#313131"/>
<rect x="687.1" y="233.5" width="1.1" height="4.2" fill="#55a9dc"/>
<text x="689.50" y="236.60" font-size="2.55" fill="#ececec" text-anchor="start" font-weight="bold" textLength="1.04" lengthAdjust="spacingAndGlyphs">x</text>
<path d="M699.2 235.2l0.6 0.7l0.6 -0.7" fill="none" stroke="#b4d6ea" stroke-width="0.5"/>
<rect x="687.5" y="238.9" width="14.0" height="4.0" rx="0.5" fill="#313131"/>
<rect x="687.1" y="238.8" width="1.1" height="4.2" fill="#55a9dc"/>
<text x="689.50" y="241.90" font-size="2.55" fill="#ececec" text-anchor="start" font-weight="bold" textLength="1.04" lengthAdjust="spacingAndGlyphs">y</text>
<path d="M699.2 240.5l0.6 0.7l0.6 -0.7" fill="none" stroke="#b4d6ea" stroke-width="0.5"/>
<rect x="706.1" y="233.6" width="5.4" height="4.0" rx="0.6" fill="#313131"/>
<text x="710.10" y="236.60" font-size="2.55" fill="#ececec" text-anchor="end" font-weight="bold" textLength="2.79" lengthAdjust="spacingAndGlyphs">var</text>
</g>
<g>
<rect x="601.2" y="232.1" width="24.8" height="18.9" rx="1.1" fill="#ffffff"/>
<rect x="601.7" y="232.6" width="23.8" height="17.9" rx="0.8" fill="#3a3a3a"/>
<path d="M601.7 239.8V233.4a0.8 0.8 0 0 1 0.8 -0.8H624.7a0.8 0.8 0 0 1 0.8 0.8V239.8z" fill="#4e4e4e"/>
<path d="M604.3 234.9h-0.8v2.6h0.8 M605.5 234.9h0.8v2.6h-0.8" fill="none" stroke="#cfcfcf" stroke-width="0.4"/>
<rect x="604.1" y="241.1" width="16.0" height="4.4" rx="0.5" fill="#303030" stroke="#4b4b4b" stroke-width="0.3"/>
<text x="605.90" y="244.20" font-size="2.55" fill="#e6a05a" font-weight="bold" textLength="4.60" lengthAdjust="spacingAndGlyphs">&quot;-&quot;;</text>
<rect x="620.9" y="241.6" width="3.4" height="3.4" rx="0.3" fill="#2f2f2f"/>
<text x="622.60" y="244.20" font-size="2.55" fill="#ddd" text-anchor="middle" font-weight="bold" textLength="1.09" lengthAdjust="spacingAndGlyphs">&gt;</text>
</g>
<g>
<rect x="732.1" y="233.2" width="25.3" height="23.3" rx="1.1" fill="#ffffff"/>
<rect x="732.6" y="233.7" width="24.3" height="22.3" rx="0.8" fill="#3a3a3a"/>
<path d="M732.6 240.9V234.5a0.8 0.8 0 0 1 0.8 -0.8H756.1a0.8 0.8 0 0 1 0.8 0.8V240.9z" fill="#4e4e4e"/>
<rect x="735.2" y="236.3" width="1.9" height="1.9" fill="#b4d9ee" opacity="0.85"/>
<rect x="732.6" y="241.9" width="14.0" height="4.0" rx="0.5" fill="#313131"/>
<rect x="732.2" y="241.8" width="1.1" height="4.2" fill="#55a9dc"/>
<text x="734.60" y="244.90" font-size="2.55" fill="#ececec" text-anchor="start" font-weight="bold" textLength="1.04" lengthAdjust="spacingAndGlyphs">x</text>
<path d="M744.3 243.5l0.6 0.7l0.6 -0.7" fill="none" stroke="#b4d6ea" stroke-width="0.5"/>
<rect x="732.6" y="247.2" width="14.0" height="4.0" rx="0.5" fill="#313131"/>
<rect x="732.2" y="247.1" width="1.1" height="4.2" fill="#55a9dc"/>
<text x="734.60" y="250.20" font-size="2.55" fill="#ececec" text-anchor="start" font-weight="bold" textLength="1.04" lengthAdjust="spacingAndGlyphs">y</text>
<path d="M744.3 248.8l0.6 0.7l0.6 -0.7" fill="none" stroke="#b4d6ea" stroke-width="0.5"/>
<rect x="750.9" y="241.9" width="5.4" height="4.0" rx="0.6" fill="#313131"/>
<text x="754.90" y="244.90" font-size="2.55" fill="#ececec" text-anchor="end" font-weight="bold" textLength="2.79" lengthAdjust="spacingAndGlyphs">var</text>
</g>
<g>
<rect x="386.3" y="264.8" width="56.5" height="22.7" rx="1.1" fill="#ffffff"/>
<rect x="386.8" y="265.3" width="55.5" height="21.7" rx="0.8" fill="#3a3a3a"/>
<path d="M386.8 272.5V266.1a0.8 0.8 0 0 1 0.8 -0.8H441.5a0.8 0.8 0 0 1 0.8 0.8V272.5z" fill="#4e4e4e"/>
<circle cx="390.3" cy="268.9" r="2.1" fill="none" stroke="#d0d0d0" stroke-width="0.35"/>
<path d="M389.4 268.3l0.9 0.9l0.9 -0.9" fill="none" stroke="#d0d0d0" stroke-width="0.35"/>
<rect x="386.8" y="273.5" width="38.0" height="4.0" rx="0.5" fill="#313131"/>
<rect x="386.4" y="273.4" width="1.1" height="4.2" fill="#55a9dc"/>
<text x="388.80" y="276.50" font-size="2.55" fill="#ececec" text-anchor="start" font-weight="bold" textLength="5.48" lengthAdjust="spacingAndGlyphs">object</text>
<path d="M422.5 275.1l0.6 0.7l0.6 -0.7" fill="none" stroke="#b4d6ea" stroke-width="0.5"/>
<rect x="386.8" y="278.8" width="38.0" height="4.0" rx="0.5" fill="#313131"/>
<rect x="386.4" y="278.7" width="1.1" height="4.2" fill="#55a9dc"/>
<text x="388.80" y="281.80" font-size="2.55" fill="#ececec" text-anchor="start" font-weight="bold" textLength="24.10" lengthAdjust="spacingAndGlyphs">propertySetDefinitionName</text>
<path d="M422.5 280.4l0.6 0.7l0.6 -0.7" fill="none" stroke="#b4d6ea" stroke-width="0.5"/>
<rect x="428.5" y="273.5" width="13.2" height="4.0" rx="0.6" fill="#313131"/>
<text x="440.30" y="276.50" font-size="2.55" fill="#ececec" text-anchor="end" font-weight="bold" textLength="10.55" lengthAdjust="spacingAndGlyphs">PropertySet</text>
</g>
<g>
<rect x="465.6" y="264.3" width="56.3" height="23.2" rx="1.1" fill="#ffffff"/>
<rect x="466.1" y="264.8" width="55.3" height="22.2" rx="0.8" fill="#3a3a3a"/>
<path d="M466.1 272.0V265.6a0.8 0.8 0 0 1 0.8 -0.8H520.6a0.8 0.8 0 0 1 0.8 0.8V272.0z" fill="#4e4e4e"/>
<circle cx="469.6" cy="268.4" r="2.1" fill="none" stroke="#d0d0d0" stroke-width="0.35"/>
<path d="M468.7 267.8l0.9 0.9l0.9 -0.9" fill="none" stroke="#d0d0d0" stroke-width="0.35"/>
<rect x="466.1" y="273.0" width="38.0" height="4.0" rx="0.5" fill="#313131"/>
<rect x="465.7" y="272.9" width="1.1" height="4.2" fill="#55a9dc"/>
<text x="468.10" y="276.00" font-size="2.55" fill="#ececec" text-anchor="start" font-weight="bold" textLength="5.48" lengthAdjust="spacingAndGlyphs">object</text>
<path d="M501.8 274.6l0.6 0.7l0.6 -0.7" fill="none" stroke="#b4d6ea" stroke-width="0.5"/>
<rect x="466.1" y="278.3" width="38.0" height="4.0" rx="0.5" fill="#313131"/>
<rect x="465.7" y="278.2" width="1.1" height="4.2" fill="#55a9dc"/>
<text x="468.10" y="281.30" font-size="2.55" fill="#ececec" text-anchor="start" font-weight="bold" textLength="24.10" lengthAdjust="spacingAndGlyphs">propertySetDefinitionName</text>
<path d="M501.8 279.9l0.6 0.7l0.6 -0.7" fill="none" stroke="#b4d6ea" stroke-width="0.5"/>
<rect x="507.6" y="273.0" width="13.2" height="4.0" rx="0.6" fill="#313131"/>
<text x="519.40" y="276.00" font-size="2.55" fill="#ececec" text-anchor="end" font-weight="bold" textLength="10.55" lengthAdjust="spacingAndGlyphs">PropertySet</text>
</g>
<g>
<rect x="532.5" y="261.7" width="46.9" height="22.8" rx="1.1" fill="#ffffff"/>
<rect x="533.0" y="262.2" width="45.9" height="21.8" rx="0.8" fill="#3a3a3a"/>
<path d="M533.0 269.4V263.0a0.8 0.8 0 0 1 0.8 -0.8H578.1a0.8 0.8 0 0 1 0.8 0.8V269.4z" fill="#4e4e4e"/>
<circle cx="536.5" cy="265.8" r="2.1" fill="none" stroke="#d0d0d0" stroke-width="0.35"/>
<path d="M535.6 265.2l0.9 0.9l0.9 -0.9" fill="none" stroke="#d0d0d0" stroke-width="0.35"/>
<rect x="533.0" y="270.4" width="24.0" height="4.0" rx="0.5" fill="#313131"/>
<rect x="532.6" y="270.3" width="1.1" height="4.2" fill="#55a9dc"/>
<text x="535.00" y="273.40" font-size="2.55" fill="#ececec" text-anchor="start" font-weight="bold" textLength="10.45" lengthAdjust="spacingAndGlyphs">propertySet</text>
<path d="M554.7 272.0l0.6 0.7l0.6 -0.7" fill="none" stroke="#b4d6ea" stroke-width="0.5"/>
<rect x="533.0" y="275.7" width="24.0" height="4.0" rx="0.5" fill="#313131"/>
<rect x="532.6" y="275.6" width="1.1" height="4.2" fill="#55a9dc"/>
<text x="535.00" y="278.70" font-size="2.55" fill="#ececec" text-anchor="start" font-weight="bold" textLength="4.86" lengthAdjust="spacingAndGlyphs">name</text>
<path d="M554.7 277.3l0.6 0.7l0.6 -0.7" fill="none" stroke="#b4d6ea" stroke-width="0.5"/>
<rect x="568.0" y="270.4" width="10.3" height="4.0" rx="0.6" fill="#313131"/>
<text x="576.90" y="273.40" font-size="2.55" fill="#ececec" text-anchor="end" font-weight="bold" textLength="7.65" lengthAdjust="spacingAndGlyphs">Property</text>
</g>
<g>
<rect x="482.7" y="291.4" width="36.7" height="18.3" rx="1.1" fill="#ffffff"/>
<rect x="483.2" y="291.9" width="35.7" height="17.3" rx="0.8" fill="#3a3a3a"/>
<path d="M483.2 299.1V292.7a0.8 0.8 0 0 1 0.8 -0.8H518.1a0.8 0.8 0 0 1 0.8 0.8V299.1z" fill="#4e4e4e"/>
<rect x="484.7" y="294.3" width="1.7" height="2.0" rx="0.3" fill="#c98d62" opacity="0.9"/>
<rect x="515.9" y="294.5" width="1.5" height="1.6" rx="0.4" fill="#45a0d8"/>
<rect x="485.6" y="300.4" width="27.9" height="4.4" rx="0.5" fill="#303030" stroke="#4b4b4b" stroke-width="0.3"/>
<text x="486.80" y="303.50" font-size="2.55" fill="#e6a05a" font-weight="bold" textLength="24.10" lengthAdjust="spacingAndGlyphs"><tspan fill="#9fc0d0">&quot;</tspan>TKS_IFA_AllTraces<tspan fill="#a9bcc6">&quot;;</tspan></text>
<rect x="514.3" y="300.9" width="3.4" height="3.4" rx="0.3" fill="#2f2f2f"/>
<text x="516.00" y="303.50" font-size="2.55" fill="#ddd" text-anchor="middle" font-weight="bold" textLength="1.09" lengthAdjust="spacingAndGlyphs">&gt;</text>
</g>
<g>
<rect x="476.3" y="313.7" width="56.5" height="22.7" rx="1.1" fill="#ffffff"/>
<rect x="476.8" y="314.2" width="55.5" height="21.7" rx="0.8" fill="#3a3a3a"/>
<path d="M476.8 321.4V315.0a0.8 0.8 0 0 1 0.8 -0.8H531.5a0.8 0.8 0 0 1 0.8 0.8V321.4z" fill="#4e4e4e"/>
<circle cx="480.3" cy="317.8" r="2.1" fill="none" stroke="#d0d0d0" stroke-width="0.35"/>
<path d="M479.4 317.2l0.9 0.9l0.9 -0.9" fill="none" stroke="#d0d0d0" stroke-width="0.35"/>
<rect x="476.8" y="322.4" width="38.0" height="4.0" rx="0.5" fill="#313131"/>
<rect x="476.4" y="322.3" width="1.1" height="4.2" fill="#55a9dc"/>
<text x="478.80" y="325.40" font-size="2.55" fill="#ececec" text-anchor="start" font-weight="bold" textLength="5.48" lengthAdjust="spacingAndGlyphs">object</text>
<path d="M512.5 324.0l0.6 0.7l0.6 -0.7" fill="none" stroke="#b4d6ea" stroke-width="0.5"/>
<rect x="476.8" y="327.7" width="38.0" height="4.0" rx="0.5" fill="#313131"/>
<rect x="476.4" y="327.6" width="1.1" height="4.2" fill="#55a9dc"/>
<text x="478.80" y="330.70" font-size="2.55" fill="#ececec" text-anchor="start" font-weight="bold" textLength="24.10" lengthAdjust="spacingAndGlyphs">propertySetDefinitionName</text>
<path d="M512.5 329.3l0.6 0.7l0.6 -0.7" fill="none" stroke="#b4d6ea" stroke-width="0.5"/>
<rect x="518.5" y="322.4" width="13.2" height="4.0" rx="0.6" fill="#313131"/>
<text x="530.30" y="325.40" font-size="2.55" fill="#ececec" text-anchor="end" font-weight="bold" textLength="10.55" lengthAdjust="spacingAndGlyphs">PropertySet</text>
</g>
<g>
<rect x="588.6" y="263.4" width="36.0" height="18.6" rx="1.1" fill="#ffffff"/>
<rect x="589.1" y="263.9" width="35.0" height="17.6" rx="0.8" fill="#3a3a3a"/>
<path d="M589.1 271.1V264.7a0.8 0.8 0 0 1 0.8 -0.8H623.3a0.8 0.8 0 0 1 0.8 0.8V271.1z" fill="#4e4e4e"/>
<circle cx="592.6" cy="267.5" r="2.1" fill="none" stroke="#d0d0d0" stroke-width="0.35"/>
<path d="M591.7 266.9l0.9 0.9l0.9 -0.9" fill="none" stroke="#d0d0d0" stroke-width="0.35"/>
<rect x="589.1" y="272.1" width="21.5" height="4.0" rx="0.5" fill="#313131"/>
<rect x="588.7" y="272.0" width="1.1" height="4.2" fill="#55a9dc"/>
<text x="591.10" y="275.10" font-size="2.55" fill="#ececec" text-anchor="start" font-weight="bold" textLength="7.55" lengthAdjust="spacingAndGlyphs">property</text>
<path d="M608.3 273.7l0.6 0.7l0.6 -0.7" fill="none" stroke="#b4d6ea" stroke-width="0.5"/>
<rect x="614.6" y="272.1" width="8.9" height="4.0" rx="0.6" fill="#313131"/>
<text x="622.10" y="275.10" font-size="2.55" fill="#ececec" text-anchor="end" font-weight="bold" textLength="6.31" lengthAdjust="spacingAndGlyphs">var[]..[]</text>
</g>
<g>
<rect x="688.7" y="252.2" width="24.8" height="18.6" rx="1.1" fill="#ffffff"/>
<rect x="689.2" y="252.7" width="23.8" height="17.6" rx="0.8" fill="#3a3a3a"/>
<path d="M689.2 259.9V253.5a0.8 0.8 0 0 1 0.8 -0.8H712.2a0.8 0.8 0 0 1 0.8 0.8V259.9z" fill="#4e4e4e"/>
<rect x="690.7" y="255.1" width="1.7" height="2.0" rx="0.3" fill="#c98d62" opacity="0.9"/>
<rect x="691.6" y="261.2" width="16.0" height="4.4" rx="0.5" fill="#303030" stroke="#4b4b4b" stroke-width="0.3"/>
<text x="693.40" y="264.30" font-size="2.55" fill="#e6a05a" font-weight="bold" textLength="4.40" lengthAdjust="spacingAndGlyphs">&quot;-&quot;;</text>
<rect x="708.4" y="261.7" width="3.4" height="3.4" rx="0.3" fill="#2f2f2f"/>
<text x="710.10" y="264.30" font-size="2.55" fill="#ddd" text-anchor="middle" font-weight="bold" textLength="1.09" lengthAdjust="spacingAndGlyphs">&gt;</text>
</g>
<g>
<rect x="615.8" y="285.2" width="56.8" height="23.3" rx="1.1" fill="#ffffff"/>
<rect x="616.3" y="285.7" width="55.8" height="22.3" rx="0.8" fill="#3a3a3a"/>
<path d="M616.3 292.9V286.5a0.8 0.8 0 0 1 0.8 -0.8H671.3a0.8 0.8 0 0 1 0.8 0.8V292.9z" fill="#4e4e4e"/>
<circle cx="619.8" cy="289.3" r="2.1" fill="none" stroke="#d0d0d0" stroke-width="0.35"/>
<path d="M618.9 288.7l0.9 0.9l0.9 -0.9" fill="none" stroke="#d0d0d0" stroke-width="0.35"/>
<rect x="616.3" y="293.9" width="38.0" height="4.0" rx="0.5" fill="#313131"/>
<rect x="615.9" y="293.8" width="1.1" height="4.2" fill="#55a9dc"/>
<text x="618.30" y="296.90" font-size="2.55" fill="#ececec" text-anchor="start" font-weight="bold" textLength="5.48" lengthAdjust="spacingAndGlyphs">object</text>
<path d="M652.0 295.5l0.6 0.7l0.6 -0.7" fill="none" stroke="#b4d6ea" stroke-width="0.5"/>
<rect x="616.3" y="299.2" width="38.0" height="4.0" rx="0.5" fill="#313131"/>
<rect x="615.9" y="299.1" width="1.1" height="4.2" fill="#55a9dc"/>
<text x="618.30" y="302.20" font-size="2.55" fill="#ececec" text-anchor="start" font-weight="bold" textLength="24.10" lengthAdjust="spacingAndGlyphs">propertySetDefinitionName</text>
<path d="M652.0 300.8l0.6 0.7l0.6 -0.7" fill="none" stroke="#b4d6ea" stroke-width="0.5"/>
<rect x="658.3" y="293.9" width="13.2" height="4.0" rx="0.6" fill="#313131"/>
<text x="670.10" y="296.90" font-size="2.55" fill="#ececec" text-anchor="end" font-weight="bold" textLength="10.55" lengthAdjust="spacingAndGlyphs">PropertySet</text>
</g>
<g>
<rect x="698.7" y="289.9" width="46.9" height="23.1" rx="1.1" fill="#ffffff"/>
<rect x="699.2" y="290.4" width="45.9" height="22.1" rx="0.8" fill="#3a3a3a"/>
<path d="M699.2 297.6V291.2a0.8 0.8 0 0 1 0.8 -0.8H744.3a0.8 0.8 0 0 1 0.8 0.8V297.6z" fill="#4e4e4e"/>
<circle cx="702.7" cy="294.0" r="2.1" fill="none" stroke="#d0d0d0" stroke-width="0.35"/>
<path d="M701.8 293.4l0.9 0.9l0.9 -0.9" fill="none" stroke="#d0d0d0" stroke-width="0.35"/>
<rect x="699.2" y="298.6" width="24.0" height="4.0" rx="0.5" fill="#313131"/>
<rect x="698.8" y="298.5" width="1.1" height="4.2" fill="#55a9dc"/>
<text x="701.20" y="301.60" font-size="2.55" fill="#ececec" text-anchor="start" font-weight="bold" textLength="10.45" lengthAdjust="spacingAndGlyphs">propertySet</text>
<path d="M720.9 300.2l0.6 0.7l0.6 -0.7" fill="none" stroke="#b4d6ea" stroke-width="0.5"/>
<rect x="699.2" y="303.9" width="24.0" height="4.0" rx="0.5" fill="#313131"/>
<rect x="698.8" y="303.8" width="1.1" height="4.2" fill="#55a9dc"/>
<text x="701.20" y="306.90" font-size="2.55" fill="#ececec" text-anchor="start" font-weight="bold" textLength="4.86" lengthAdjust="spacingAndGlyphs">name</text>
<path d="M720.9 305.5l0.6 0.7l0.6 -0.7" fill="none" stroke="#b4d6ea" stroke-width="0.5"/>
<rect x="734.2" y="298.6" width="10.3" height="4.0" rx="0.6" fill="#313131"/>
<text x="743.10" y="301.60" font-size="2.55" fill="#ececec" text-anchor="end" font-weight="bold" textLength="7.65" lengthAdjust="spacingAndGlyphs">Property</text>
</g>
<g>
<rect x="623.0" y="315.9" width="51.1" height="18.4" rx="1.1" fill="#ffffff"/>
<rect x="623.5" y="316.4" width="50.1" height="17.4" rx="0.8" fill="#3a3a3a"/>
<path d="M623.5 323.6V317.2a0.8 0.8 0 0 1 0.8 -0.8H672.8a0.8 0.8 0 0 1 0.8 0.8V323.6z" fill="#4e4e4e"/>
<rect x="625.0" y="318.8" width="1.7" height="2.0" rx="0.3" fill="#c98d62" opacity="0.9"/>
<rect x="670.6" y="319.0" width="1.5" height="1.6" rx="0.4" fill="#45a0d8"/>
<rect x="625.9" y="324.9" width="42.3" height="4.4" rx="0.5" fill="#303030" stroke="#4b4b4b" stroke-width="0.3"/>
<text x="627.10" y="328.00" font-size="2.55" fill="#e6a05a" font-weight="bold" textLength="38.50" lengthAdjust="spacingAndGlyphs"><tspan fill="#9fc0d0">&quot;</tspan>TKS_IFA_PressurePipeNetworks<tspan fill="#a9bcc6">&quot;;</tspan></text>
<rect x="669.0" y="325.4" width="3.4" height="3.4" rx="0.3" fill="#2f2f2f"/>
<text x="670.70" y="328.00" font-size="2.55" fill="#ddd" text-anchor="middle" font-weight="bold" textLength="1.09" lengthAdjust="spacingAndGlyphs">&gt;</text>
</g>
<g>
<rect x="551.2" y="323.3" width="46.3" height="23.1" rx="1.1" fill="#ffffff"/>
<rect x="551.7" y="323.8" width="45.3" height="22.1" rx="0.8" fill="#3a3a3a"/>
<path d="M551.7 331.0V324.6a0.8 0.8 0 0 1 0.8 -0.8H596.2a0.8 0.8 0 0 1 0.8 0.8V331.0z" fill="#4e4e4e"/>
<circle cx="555.2" cy="327.4" r="2.1" fill="none" stroke="#d0d0d0" stroke-width="0.35"/>
<path d="M554.3 326.8l0.9 0.9l0.9 -0.9" fill="none" stroke="#d0d0d0" stroke-width="0.35"/>
<rect x="551.7" y="332.0" width="24.0" height="4.0" rx="0.5" fill="#313131"/>
<rect x="551.3" y="331.9" width="1.1" height="4.2" fill="#55a9dc"/>
<text x="553.70" y="335.00" font-size="2.55" fill="#ececec" text-anchor="start" font-weight="bold" textLength="10.45" lengthAdjust="spacingAndGlyphs">propertySet</text>
<path d="M573.4 333.6l0.6 0.7l0.6 -0.7" fill="none" stroke="#b4d6ea" stroke-width="0.5"/>
<rect x="551.7" y="337.3" width="24.0" height="4.0" rx="0.5" fill="#313131"/>
<rect x="551.3" y="337.2" width="1.1" height="4.2" fill="#55a9dc"/>
<text x="553.70" y="340.30" font-size="2.55" fill="#ececec" text-anchor="start" font-weight="bold" textLength="4.86" lengthAdjust="spacingAndGlyphs">name</text>
<path d="M573.4 338.9l0.6 0.7l0.6 -0.7" fill="none" stroke="#b4d6ea" stroke-width="0.5"/>
<rect x="586.1" y="332.0" width="10.3" height="4.0" rx="0.6" fill="#313131"/>
<text x="595.00" y="335.00" font-size="2.55" fill="#ececec" text-anchor="end" font-weight="bold" textLength="7.65" lengthAdjust="spacingAndGlyphs">Property</text>
</g>
<g>
<rect x="710.1" y="315.9" width="36.0" height="18.4" rx="1.1" fill="#ffffff"/>
<rect x="710.6" y="316.4" width="35.0" height="17.4" rx="0.8" fill="#3a3a3a"/>
<path d="M710.6 323.6V317.2a0.8 0.8 0 0 1 0.8 -0.8H744.8a0.8 0.8 0 0 1 0.8 0.8V323.6z" fill="#4e4e4e"/>
<circle cx="714.1" cy="320.0" r="2.1" fill="none" stroke="#d0d0d0" stroke-width="0.35"/>
<path d="M713.2 319.4l0.9 0.9l0.9 -0.9" fill="none" stroke="#d0d0d0" stroke-width="0.35"/>
<rect x="710.6" y="324.6" width="21.5" height="4.0" rx="0.5" fill="#313131"/>
<rect x="710.2" y="324.5" width="1.1" height="4.2" fill="#55a9dc"/>
<text x="712.60" y="327.60" font-size="2.55" fill="#ececec" text-anchor="start" font-weight="bold" textLength="7.55" lengthAdjust="spacingAndGlyphs">property</text>
<path d="M729.8 326.2l0.6 0.7l0.6 -0.7" fill="none" stroke="#b4d6ea" stroke-width="0.5"/>
<rect x="736.1" y="324.6" width="8.9" height="4.0" rx="0.6" fill="#313131"/>
<text x="743.60" y="327.60" font-size="2.55" fill="#ececec" text-anchor="end" font-weight="bold" textLength="6.31" lengthAdjust="spacingAndGlyphs">var[]..[]</text>
</g>
<g>
<rect x="787.4" y="260.4" width="25.3" height="23.3" rx="1.1" fill="#ffffff"/>
<rect x="787.9" y="260.9" width="24.3" height="22.3" rx="0.8" fill="#3a3a3a"/>
<path d="M787.9 268.1V261.7a0.8 0.8 0 0 1 0.8 -0.8H811.4a0.8 0.8 0 0 1 0.8 0.8V268.1z" fill="#4e4e4e"/>
<rect x="790.5" y="263.5" width="1.9" height="1.9" fill="#b4d9ee" opacity="0.85"/>
<rect x="787.9" y="269.1" width="14.0" height="4.0" rx="0.5" fill="#313131"/>
<rect x="787.5" y="269.0" width="1.1" height="4.2" fill="#55a9dc"/>
<text x="789.90" y="272.10" font-size="2.55" fill="#ececec" text-anchor="start" font-weight="bold" textLength="1.04" lengthAdjust="spacingAndGlyphs">x</text>
<path d="M799.6 270.7l0.6 0.7l0.6 -0.7" fill="none" stroke="#b4d6ea" stroke-width="0.5"/>
<rect x="787.9" y="274.4" width="14.0" height="4.0" rx="0.5" fill="#313131"/>
<rect x="787.5" y="274.3" width="1.1" height="4.2" fill="#55a9dc"/>
<text x="789.90" y="277.40" font-size="2.55" fill="#ececec" text-anchor="start" font-weight="bold" textLength="1.04" lengthAdjust="spacingAndGlyphs">y</text>
<path d="M799.6 276.0l0.6 0.7l0.6 -0.7" fill="none" stroke="#b4d6ea" stroke-width="0.5"/>
<rect x="806.2" y="269.1" width="5.4" height="4.0" rx="0.6" fill="#313131"/>
<text x="810.20" y="272.10" font-size="2.55" fill="#ececec" text-anchor="end" font-weight="bold" textLength="2.79" lengthAdjust="spacingAndGlyphs">var</text>
</g>
<g>
<rect x="850.7" y="263.8" width="25.7" height="23.6" rx="1.1" fill="#ffffff"/>
<rect x="851.2" y="264.3" width="24.7" height="22.6" rx="0.8" fill="#3a3a3a"/>
<path d="M851.2 271.5V265.1a0.8 0.8 0 0 1 0.8 -0.8H875.1a0.8 0.8 0 0 1 0.8 0.8V271.5z" fill="#4e4e4e"/>
<rect x="853.8" y="266.9" width="1.9" height="1.9" fill="#b4d9ee" opacity="0.85"/>
<rect x="851.2" y="272.5" width="14.0" height="4.0" rx="0.5" fill="#313131"/>
<rect x="850.8" y="272.4" width="1.1" height="4.2" fill="#55a9dc"/>
<text x="853.20" y="275.50" font-size="2.55" fill="#ececec" text-anchor="start" font-weight="bold" textLength="1.04" lengthAdjust="spacingAndGlyphs">x</text>
<path d="M862.9 274.1l0.6 0.7l0.6 -0.7" fill="none" stroke="#b4d6ea" stroke-width="0.5"/>
<rect x="851.2" y="277.8" width="14.0" height="4.0" rx="0.5" fill="#313131"/>
<rect x="850.8" y="277.7" width="1.1" height="4.2" fill="#55a9dc"/>
<text x="853.20" y="280.80" font-size="2.55" fill="#ececec" text-anchor="start" font-weight="bold" textLength="1.04" lengthAdjust="spacingAndGlyphs">y</text>
<path d="M862.9 279.4l0.6 0.7l0.6 -0.7" fill="none" stroke="#b4d6ea" stroke-width="0.5"/>
<rect x="869.9" y="272.5" width="5.4" height="4.0" rx="0.6" fill="#313131"/>
<text x="873.90" y="275.50" font-size="2.55" fill="#ececec" text-anchor="end" font-weight="bold" textLength="2.79" lengthAdjust="spacingAndGlyphs">var</text>
</g>
<g>
<rect x="786.5" y="288.2" width="25.0" height="18.6" rx="1.1" fill="#ffffff"/>
<rect x="787.0" y="288.7" width="24.0" height="17.6" rx="0.8" fill="#3a3a3a"/>
<path d="M787.0 295.9V289.5a0.8 0.8 0 0 1 0.8 -0.8H810.2a0.8 0.8 0 0 1 0.8 0.8V295.9z" fill="#4e4e4e"/>
<rect x="788.5" y="291.1" width="1.7" height="2.0" rx="0.3" fill="#c98d62" opacity="0.9"/>
<rect x="789.4" y="297.2" width="16.2" height="4.4" rx="0.5" fill="#303030" stroke="#4b4b4b" stroke-width="0.3"/>
<text x="791.20" y="300.30" font-size="2.55" fill="#e6a05a" font-weight="bold" textLength="4.40" lengthAdjust="spacingAndGlyphs">&quot;-&quot;;</text>
<rect x="806.4" y="297.7" width="3.4" height="3.4" rx="0.3" fill="#2f2f2f"/>
<text x="808.10" y="300.30" font-size="2.55" fill="#ddd" text-anchor="middle" font-weight="bold" textLength="1.09" lengthAdjust="spacingAndGlyphs">&gt;</text>
</g>
<g>
<rect x="781.5" y="315.9" width="35.9" height="18.4" rx="1.1" fill="#ffffff"/>
<rect x="782.0" y="316.4" width="34.9" height="17.4" rx="0.8" fill="#3a3a3a"/>
<path d="M782.0 323.6V317.2a0.8 0.8 0 0 1 0.8 -0.8H816.1a0.8 0.8 0 0 1 0.8 0.8V323.6z" fill="#4e4e4e"/>
<circle cx="785.5" cy="320.0" r="2.1" fill="none" stroke="#d0d0d0" stroke-width="0.35"/>
<path d="M784.6 319.4l0.9 0.9l0.9 -0.9" fill="none" stroke="#d0d0d0" stroke-width="0.35"/>
<rect x="782.0" y="324.6" width="21.5" height="4.0" rx="0.5" fill="#313131"/>
<rect x="781.6" y="324.5" width="1.1" height="4.2" fill="#55a9dc"/>
<text x="784.00" y="327.60" font-size="2.55" fill="#ececec" text-anchor="start" font-weight="bold" textLength="7.55" lengthAdjust="spacingAndGlyphs">property</text>
<path d="M801.2 326.2l0.6 0.7l0.6 -0.7" fill="none" stroke="#b4d6ea" stroke-width="0.5"/>
<rect x="807.4" y="324.6" width="8.9" height="4.0" rx="0.6" fill="#313131"/>
<text x="814.90" y="327.60" font-size="2.55" fill="#ececec" text-anchor="end" font-weight="bold" textLength="6.31" lengthAdjust="spacingAndGlyphs">var[]..[]</text>
</g>
<g>
<rect x="961.0" y="293.9" width="25.5" height="23.3" rx="1.1" fill="#ffffff"/>
<rect x="961.5" y="294.4" width="24.5" height="22.3" rx="0.8" fill="#3a3a3a"/>
<path d="M961.5 301.6V295.2a0.8 0.8 0 0 1 0.8 -0.8H985.2a0.8 0.8 0 0 1 0.8 0.8V301.6z" fill="#4e4e4e"/>
<rect x="964.1" y="297.0" width="1.9" height="1.9" fill="#b4d9ee" opacity="0.85"/>
<rect x="961.5" y="302.6" width="14.0" height="4.0" rx="0.5" fill="#313131"/>
<rect x="961.1" y="302.5" width="1.1" height="4.2" fill="#55a9dc"/>
<text x="963.50" y="305.60" font-size="2.55" fill="#ececec" text-anchor="start" font-weight="bold" textLength="1.04" lengthAdjust="spacingAndGlyphs">x</text>
<path d="M973.2 304.2l0.6 0.7l0.6 -0.7" fill="none" stroke="#b4d6ea" stroke-width="0.5"/>
<rect x="961.5" y="307.9" width="14.0" height="4.0" rx="0.5" fill="#313131"/>
<rect x="961.1" y="307.8" width="1.1" height="4.2" fill="#55a9dc"/>
<text x="963.50" y="310.90" font-size="2.55" fill="#ececec" text-anchor="start" font-weight="bold" textLength="1.04" lengthAdjust="spacingAndGlyphs">y</text>
<path d="M973.2 309.5l0.6 0.7l0.6 -0.7" fill="none" stroke="#b4d6ea" stroke-width="0.5"/>
<rect x="980.0" y="302.6" width="5.4" height="4.0" rx="0.6" fill="#313131"/>
<text x="984.00" y="305.60" font-size="2.55" fill="#ececec" text-anchor="end" font-weight="bold" textLength="2.79" lengthAdjust="spacingAndGlyphs">var</text>
</g>
<g>
<rect x="491.6" y="341.2" width="41.5" height="18.6" rx="1.1" fill="#ffffff"/>
<rect x="492.1" y="341.7" width="40.5" height="17.6" rx="0.8" fill="#3a3a3a"/>
<path d="M492.1 348.9V342.5a0.8 0.8 0 0 1 0.8 -0.8H531.8a0.8 0.8 0 0 1 0.8 0.8V348.9z" fill="#4e4e4e"/>
<rect x="493.6" y="344.1" width="1.7" height="2.0" rx="0.3" fill="#c98d62" opacity="0.9"/>
<rect x="529.6" y="344.3" width="1.5" height="1.6" rx="0.4" fill="#45a0d8"/>
<rect x="494.5" y="350.2" width="32.7" height="4.4" rx="0.5" fill="#303030" stroke="#4b4b4b" stroke-width="0.3"/>
<text x="495.70" y="353.30" font-size="2.55" fill="#e6a05a" font-weight="bold" textLength="28.90" lengthAdjust="spacingAndGlyphs"><tspan fill="#9fc0d0">&quot;</tspan>TKS_IFA_PressureParts<tspan fill="#a9bcc6">&quot;;</tspan></text>
<rect x="528.0" y="350.7" width="3.4" height="3.4" rx="0.3" fill="#2f2f2f"/>
<text x="529.70" y="353.30" font-size="2.55" fill="#ddd" text-anchor="middle" font-weight="bold" textLength="1.09" lengthAdjust="spacingAndGlyphs">&gt;</text>
</g>
<g>
<rect x="477.3" y="372.2" width="52.0" height="23.3" rx="1.1" fill="#ffffff"/>
<rect x="477.8" y="372.7" width="51.0" height="22.3" rx="0.8" fill="#3a3a3a"/>
<path d="M477.8 379.9V373.5a0.8 0.8 0 0 1 0.8 -0.8H528.0a0.8 0.8 0 0 1 0.8 0.8V379.9z" fill="#4e4e4e"/>
<circle cx="481.3" cy="376.3" r="2.1" fill="none" stroke="#d0d0d0" stroke-width="0.35"/>
<path d="M480.4 375.7l0.9 0.9l0.9 -0.9" fill="none" stroke="#d0d0d0" stroke-width="0.35"/>
<rect x="477.8" y="380.9" width="38.0" height="4.0" rx="0.5" fill="#313131"/>
<rect x="477.4" y="380.8" width="1.1" height="4.2" fill="#55a9dc"/>
<text x="479.80" y="383.90" font-size="2.55" fill="#ececec" text-anchor="start" font-weight="bold" textLength="5.48" lengthAdjust="spacingAndGlyphs">object</text>
<path d="M513.5 382.5l0.6 0.7l0.6 -0.7" fill="none" stroke="#b4d6ea" stroke-width="0.5"/>
<rect x="477.8" y="386.2" width="38.0" height="4.0" rx="0.5" fill="#313131"/>
<rect x="477.4" y="386.1" width="1.1" height="4.2" fill="#55a9dc"/>
<text x="479.80" y="389.20" font-size="2.55" fill="#ececec" text-anchor="start" font-weight="bold" textLength="24.10" lengthAdjust="spacingAndGlyphs">propertySetDefinitionName</text>
<path d="M513.5 387.8l0.6 0.7l0.6 -0.7" fill="none" stroke="#b4d6ea" stroke-width="0.5"/>
<rect x="519.8" y="380.9" width="8.4" height="4.0" rx="0.6" fill="#313131"/>
<text x="526.80" y="383.90" font-size="2.55" fill="#ececec" text-anchor="end" font-weight="bold" textLength="5.79" lengthAdjust="spacingAndGlyphs">Object</text>
</g>
<g>
<rect x="548.2" y="382.3" width="55.1" height="18.6" rx="1.1" fill="#ffffff"/>
<rect x="548.7" y="382.8" width="54.1" height="17.6" rx="0.8" fill="#3a3a3a"/>
<path d="M548.7 390.0V383.6a0.8 0.8 0 0 1 0.8 -0.8H602.0a0.8 0.8 0 0 1 0.8 0.8V390.0z" fill="#4e4e4e"/>
<rect x="550.2" y="385.2" width="1.7" height="2.0" rx="0.3" fill="#c98d62" opacity="0.9"/>
<rect x="599.8" y="385.4" width="1.5" height="1.6" rx="0.4" fill="#45a0d8"/>
<rect x="551.1" y="391.3" width="46.3" height="4.4" rx="0.5" fill="#303030" stroke="#4b4b4b" stroke-width="0.3"/>
<text x="552.30" y="394.40" font-size="2.55" fill="#e6a05a" font-weight="bold" textLength="42.50" lengthAdjust="spacingAndGlyphs"><tspan fill="#9fc0d0">&quot;</tspan>TKS_IFA_SeparatedPipeNetworkParts<tspan fill="#a9bcc6">&quot;;</tspan></text>
<rect x="598.2" y="391.8" width="3.4" height="3.4" rx="0.3" fill="#2f2f2f"/>
<text x="599.90" y="394.40" font-size="2.55" fill="#ddd" text-anchor="middle" font-weight="bold" textLength="1.09" lengthAdjust="spacingAndGlyphs">&gt;</text>
</g>
<g>
<rect x="1021.5" y="368.8" width="44.1" height="35.3" rx="1.1" fill="#6fc3ea"/>
<rect x="1022.0" y="369.3" width="43.1" height="34.3" rx="0.8" fill="#3a3a3a"/>
<path d="M1022.0 377.3V370.1a0.8 0.8 0 0 1 0.8 -0.8H1064.3a0.8 0.8 0 0 1 0.8 0.8V377.3z" fill="#4e4e4e"/>
<circle cx="1025.5" cy="372.9" r="2.1" fill="none" stroke="#d0d0d0" stroke-width="0.35"/>
<path d="M1024.6 372.3l0.9 0.9l0.9 -0.9" fill="none" stroke="#d0d0d0" stroke-width="0.35"/>
<rect x="1022.0" y="378.2" width="30.0" height="4.0" rx="0.5" fill="#313131"/>
<rect x="1021.6" y="378.1" width="1.1" height="4.2" fill="#55a9dc"/>
<text x="1024.00" y="381.20" font-size="2.55" fill="#ececec" text-anchor="start" font-weight="bold" textLength="5.48" lengthAdjust="spacingAndGlyphs">object</text>
<path d="M1049.7 379.8l0.6 0.7l0.6 -0.7" fill="none" stroke="#b4d6ea" stroke-width="0.5"/>
<rect x="1022.0" y="383.6" width="30.0" height="4.0" rx="0.5" fill="#313131"/>
<rect x="1021.6" y="383.5" width="1.1" height="4.2" fill="#55a9dc"/>
<text x="1024.00" y="386.60" font-size="2.55" fill="#ececec" text-anchor="start" font-weight="bold" textLength="15.52" lengthAdjust="spacingAndGlyphs">propertySetName</text>
<path d="M1049.7 385.2l0.6 0.7l0.6 -0.7" fill="none" stroke="#b4d6ea" stroke-width="0.5"/>
<rect x="1022.0" y="389.0" width="30.0" height="4.0" rx="0.5" fill="#313131"/>
<rect x="1021.6" y="388.9" width="1.1" height="4.2" fill="#55a9dc"/>
<text x="1024.00" y="392.00" font-size="2.55" fill="#ececec" text-anchor="start" font-weight="bold" textLength="12.62" lengthAdjust="spacingAndGlyphs">propertyName</text>
<path d="M1049.7 390.6l0.6 0.7l0.6 -0.7" fill="none" stroke="#b4d6ea" stroke-width="0.5"/>
<rect x="1022.0" y="394.4" width="30.0" height="4.0" rx="0.5" fill="#313131"/>
<rect x="1021.6" y="394.3" width="1.1" height="4.2" fill="#55a9dc"/>
<text x="1024.00" y="397.40" font-size="2.55" fill="#ececec" text-anchor="start" font-weight="bold" textLength="12.41" lengthAdjust="spacingAndGlyphs">propertyValue</text>
<path d="M1049.7 396.0l0.6 0.7l0.6 -0.7" fill="none" stroke="#b4d6ea" stroke-width="0.5"/>
<rect x="1056.1" y="378.2" width="8.4" height="4.0" rx="0.6" fill="#313131"/>
<text x="1063.10" y="381.20" font-size="2.55" fill="#ececec" text-anchor="end" font-weight="bold" textLength="5.79" lengthAdjust="spacingAndGlyphs">Object</text>
</g>
</g></svg>
</div>
<div id="rborder"></div>
<div class="box" style="left:1014.4px;top:62.3px;width:59.6px;height:14px"></div>
<div style="position:absolute;left:1044.2px;top:63px;width:1px;height:12.6px;background:#e4e4e4"></div>
<div class="box" style="left:1059.8px;top:81.7px;width:14.2px;height:40.6px"></div>
<div class="box" style="left:1059.8px;top:126.2px;width:14.2px;height:14px"></div>
<svg style="left:1010px;top:60px" width="70" height="85" viewBox="1010 60 70 85" fill="none">
<g stroke="#6e6e6e" stroke-width="0.6">
<circle cx="1022.1" cy="69.9" r="2.9"/><path d="M1022.1 69.9 L1024.2 67.9 M1022.1 69.9h2.9"/>
<path d="M1023.6 71.2 L1027.3 65.3 L1030.8 71.2 Z"/>
<path d="M1032.4 67.2h5v5.2h-5z M1032.4 67.2l1.8-1.8h5.4l-2.2 1.8 M1037.4 72.4l2.2-1.8v-5.2"/>
</g>
<g stroke="#1f9cee" stroke-width="0.7" fill="#9fd3f8">
<rect x="1049.3" y="65.5" width="5.6" height="3.2" rx="0.5"/>
<rect x="1052.2" y="71" width="6.2" height="2.5" rx="0.5"/>
<rect x="1063.3" y="66.7" width="7.4" height="5" rx="0.6"/>
<path d="M1054.9 67.1 C1059 67.1 1059 69.2 1063.3 69.2 M1058.4 72.3 C1061 72.3 1061 70 1063.3 70" fill="none"/>
</g>
<g stroke="#4a4a4a" stroke-width="0.85">
<path d="M1064 87.2v-1.4h1.4 M1068.6 85.8h1.4v1.4 M1070 90.6v1.4h-1.4 M1065.4 92h-1.4v-1.4"/>
<path d="M1064.2 102.4h5.6 M1067 99.6v5.6"/>
<path d="M1064.2 115.4h5.6"/>
<path d="M1067 130.6v5.6 M1064.2 133.4h5.6"/>
</g>
<g fill="#555"><path d="M1067 129.5l1.5 1.7h-3z M1067 137.3l1.5 -1.7h-3z M1063.1 133.4l1.7-1.5v3z M1070.9 133.4l-1.7-1.5v3z"/></g>
</svg>
<div id="titlebar">
<svg style="left:2px;top:1.5px" width="8" height="10" viewBox="0 0 8 10">
<rect x="0.2" y="0.2" width="7.4" height="9.3" rx="1.1" fill="#b9108f"/>
<rect x="0.9" y="6.6" width="6" height="2.2" rx="0.3" fill="#6d1736"/>
<text x="3.9" y="5.3" font-size="4.6" font-weight="bold" fill="#fff" text-anchor="middle" font-family="Liberation Sans, sans-serif">C</text>
</svg>
<span class="t" style="left:13.20px;top:1.82px;font-size:7.8px;line-height:9.36px;color:#303030;font-weight:normal;transform:scaleX(0.8607);">Dynamo</span>
<svg style="left:1000px;top:0" width="80" height="13" viewBox="0 0 80 13" fill="none" stroke="#222" stroke-width="0.7">
<path d="M12.1 6h5.6"/>
<path d="M37.6 4.6h4v4h-4z M38.8 4.6v-1.2h4v4h-1.2"/>
<path d="M63.4 3.3l5.6 5.6 M69 3.3l-5.6 5.6"/>
</svg>
</div>
<div id="menubar"></div>
<span class="t" style="left:10.30px;top:18.62px;font-size:8.8px;line-height:10.56px;color:#e6e6e6;font-weight:normal;transform:scaleX(0.9278);-webkit-text-stroke:0.15px #e6e6e6;">Dynamo</span>
<svg style="left:44.75px;top:20.20px" width="7.1" height="5.8" viewBox="0 0 7.1 5.8"><path d="M1 1h5.1l-2.55 3.8z" fill="#f2f2f2"/></svg>
<span class="t" style="left:71.00px;top:18.62px;font-size:8.8px;line-height:10.56px;color:#e6e6e6;font-weight:normal;transform:scaleX(0.9445);-webkit-text-stroke:0.15px #e6e6e6;">File</span>
<svg style="left:88.55px;top:20.20px" width="7.1" height="5.8" viewBox="0 0 7.1 5.8"><path d="M1 1h5.1l-2.55 3.8z" fill="#f2f2f2"/></svg>
<span class="t" style="left:114.30px;top:18.62px;font-size:8.8px;line-height:10.56px;color:#e6e6e6;font-weight:normal;transform:scaleX(0.9623);-webkit-text-stroke:0.15px #e6e6e6;">Edit</span>
<svg style="left:133.15px;top:20.20px" width="7.1" height="5.8" viewBox="0 0 7.1 5.8"><path d="M1 1h5.1l-2.55 3.8z" fill="#f2f2f2"/></svg>
<span class="t" style="left:159.00px;top:18.62px;font-size:8.8px;line-height:10.56px;color:#e6e6e6;font-weight:normal;transform:scaleX(0.9513);-webkit-text-stroke:0.15px #e6e6e6;">View</span>
<svg style="left:180.85px;top:20.20px" width="7.1" height="5.8" viewBox="0 0 7.1 5.8"><path d="M1 1h5.1l-2.55 3.8z" fill="#f2f2f2"/></svg>
<span class="t" style="left:207.30px;top:18.62px;font-size:8.8px;line-height:10.56px;color:#e6e6e6;font-weight:normal;transform:scaleX(0.8903);-webkit-text-stroke:0.15px #e6e6e6;">Packages</span>
<svg style="left:245.85px;top:20.20px" width="7.1" height="5.8" viewBox="0 0 7.1 5.8"><path d="M1 1h5.1l-2.55 3.8z" fill="#f2f2f2"/></svg>
<span class="t" style="left:272.50px;top:18.62px;font-size:8.8px;line-height:10.56px;color:#e6e6e6;font-weight:normal;transform:scaleX(0.9617);-webkit-text-stroke:0.15px #e6e6e6;">Help</span>
<svg style="left:293.85px;top:20.20px" width="7.1" height="5.8" viewBox="0 0 7.1 5.8"><path d="M1 1h5.1l-2.55 3.8z" fill="#f2f2f2"/></svg>
<svg style="left:319.6px;top:19px" width="9" height="10" viewBox="0 0 9 10" fill="none" stroke="#9a9a9a" stroke-width="0.7">
<path d="M5.2 1.6 L7.6 4 L6.4 4.6 L5.2 6.6 L2.6 4 L4.6 2.8z M3.9 5.3 L1.8 7.4"/></svg>
<span class="t" style="left:333.30px;top:18.62px;font-size:8.8px;line-height:10.56px;color:#e6e6e6;font-weight:normal;transform:scaleX(0.9365);-webkit-text-stroke:0.15px #e6e6e6;">Extensions</span>
<div style="position:absolute;left:392px;top:20.5px;width:8.6px;height:8.6px;border-radius:50%;background:#e9e9e9"></div>
<span class="t" style="left:395.10px;top:19.90px;font-size:8px;line-height:9.60px;color:#333;font-weight:bold;transform:scaleX(1.0000);">!</span>
<div style="position:absolute;left:403.3px;top:18.0px;width:12.2px;height:12.2px;border-radius:50%;background:#22a699"></div>
<span class="t" style="left:407.30px;top:18.90px;font-size:8.5px;line-height:10.20px;color:#eafffb;font-weight:bold;transform:scaleX(1.0000);">1</span>
<div id="toolbar"></div>
<svg style="left:0;top:34px" width="120" height="22" viewBox="0 0 120 22">
<path d="M9 6.2h4.6l2.8 2.8v6.2H9z" fill="#9b9b9b"/><path d="M13.6 6.2v2.8h2.8z" fill="#6a6a6a"/>
<path d="M31.3 7.4h3.2l0.9 1h3.6v1.2h-5.6l-2.1 4.3z" fill="#9b9b9b"/><path d="M33.2 10.3h7.4l-2.2 4.2h-7.2z" fill="#9b9b9b"/>
<path d="M55.2 6.6h7l1.2 1.2v7H55.2z" fill="#9b9b9b"/><rect x="57" y="7.2" width="4.2" height="2.6" fill="#4a4a4a"/><rect x="57" y="11.6" width="4.6" height="3" fill="#4a4a4a"/><rect x="58.3" y="12.4" width="2" height="1.2" fill="#9b9b9b"/>
<path d="M77.8 10.6l4.2-3v1.8c3.4 0 5 1.6 5.2 4.2c-1-1.4-2.6-1.9-5.2-1.9v1.9z" fill="#9b9b9b"/>
<path d="M109.4 10.6l-4.2-3v1.8c-3.4 0-5 1.6-5.2 4.2c1-1.4 2.6-1.9 5.2-1.9v1.9z" fill="#666"/>
</svg>
<div id="tab"></div>
<svg style="left:178px;top:40px" width="8" height="8" viewBox="0 0 8 8"><circle cx="3.85" cy="3.75" r="2.6" fill="#f8a31a"/></svg>
<span class="t" style="left:187.60px;top:39.00px;font-size:9.5px;line-height:11.40px;color:#f0f0f0;font-weight:normal;transform:scaleX(0.8801);-webkit-text-stroke:0.2px #f0f0f0;">COMPONENT TAG ID...</span>
<svg style="left:285px;top:40px" width="8" height="8" viewBox="0 0 8 8" fill="none" stroke="#8a8a8a" stroke-width="0.7"><path d="M1.6 1.6l4.8 4.8 M6.4 1.6l-4.8 4.8"/></svg>
<svg style="left:984px;top:40px" width="10" height="10" viewBox="0 0 10 10"><rect x="0.8" y="0.9" width="8.2" height="7.9" fill="#9c9c9c"/><path d="M1.8 7.6 V6 L3.4 4.4 L5 6 L6.2 5 L8 6.6 V7.6z" fill="#3c3c3c"/><rect x="5.6" y="2.2" width="1.6" height="1.6" fill="#3c3c3c"/></svg>
<span class="t" style="left:998.80px;top:39.84px;font-size:8.6px;line-height:10.32px;color:#e4e4e4;font-weight:normal;transform:scaleX(0.9620);-webkit-text-stroke:0.15px #e4e4e4;">Export as Image</span>
<svg style="left:1062.85px;top:40.90px" width="7.1" height="5.8" viewBox="0 0 7.1 5.8"><path d="M1 1h5.1l-2.55 3.8z" fill="#f2f2f2"/></svg>
<div id="sidebar"></div><div id="scroll"></div><div id="thumb"></div>
<svg style="left:162px;top:56px" width="11" height="20" viewBox="0 0 11 20" fill="none" stroke="#474747" stroke-width="1"><path d="M1.1 14.2l3.3-3.3 3.3 3.3"/></svg>
<div class="sep" style="top:56.5px"></div>
<svg style="left:12.2px;top:70.50px" width="7" height="9" viewBox="0 0 7 9" fill="none" stroke="#84e1e4" stroke-width="1.45"><path d="M1.6 1.3 L4.9 4.5 L1.6 7.7"/></svg>
<span class="t" style="left:23.90px;top:70.28px;font-size:9.2px;line-height:11.04px;color:#a9ccd3;font-weight:normal;transform:scaleX(0.9349);-webkit-text-stroke:0.2px #a9ccd3;">Dictionary</span>
<div class="sep" style="top:90.10px"></div>
<svg style="left:12.2px;top:103.40px" width="7" height="9" viewBox="0 0 7 9" fill="none" stroke="#84e1e4" stroke-width="1.45"><path d="M1.6 1.3 L4.9 4.5 L1.6 7.7"/></svg>
<span class="t" style="left:23.90px;top:103.18px;font-size:9.2px;line-height:11.04px;color:#a9ccd3;font-weight:normal;transform:scaleX(0.9029);-webkit-text-stroke:0.2px #a9ccd3;">Display</span>
<div class="sep" style="top:123.00px"></div>
<svg style="left:12.2px;top:136.30px" width="7" height="9" viewBox="0 0 7 9" fill="none" stroke="#84e1e4" stroke-width="1.45"><path d="M1.6 1.3 L4.9 4.5 L1.6 7.7"/></svg>
<span class="t" style="left:23.90px;top:136.08px;font-size:9.2px;line-height:11.04px;color:#a9ccd3;font-weight:normal;transform:scaleX(0.8923);-webkit-text-stroke:0.2px #a9ccd3;">Geometry</span>
<div class="sep" style="top:155.90px"></div>
<svg style="left:12.2px;top:169.20px" width="7" height="9" viewBox="0 0 7 9" fill="none" stroke="#84e1e4" stroke-width="1.45"><path d="M1.6 1.3 L4.9 4.5 L1.6 7.7"/></svg>
<span class="t" style="left:23.90px;top:168.98px;font-size:9.2px;line-height:11.04px;color:#a9ccd3;font-weight:normal;transform:scaleX(0.9507);-webkit-text-stroke:0.2px #a9ccd3;">ImportExport</span>
<div class="sep" style="top:188.80px"></div>
<svg style="left:12.2px;top:202.10px" width="7" height="9" viewBox="0 0 7 9" fill="none" stroke="#84e1e4" stroke-width="1.45"><path d="M1.6 1.3 L4.9 4.5 L1.6 7.7"/></svg>
<span class="t" style="left:23.90px;top:201.88px;font-size:9.2px;line-height:11.04px;color:#a9ccd3;font-weight:normal;transform:scaleX(0.9982);-webkit-text-stroke:0.2px #a9ccd3;">Input</span>
<div class="sep" style="top:221.70px"></div>
<svg style="left:12.2px;top:235.00px" width="7" height="9" viewBox="0 0 7 9" fill="none" stroke="#84e1e4" stroke-width="1.45"><path d="M1.6 1.3 L4.9 4.5 L1.6 7.7"/></svg>
<span class="t" style="left:23.90px;top:234.78px;font-size:9.2px;line-height:11.04px;color:#a9ccd3;font-weight:normal;transform:scaleX(0.9362);-webkit-text-stroke:0.2px #a9ccd3;">List</span>
<div class="sep" style="top:254.60px"></div>
<svg style="left:12.2px;top:267.90px" width="7" height="9" viewBox="0 0 7 9" fill="none" stroke="#84e1e4" stroke-width="1.45"><path d="M1.6 1.3 L4.9 4.5 L1.6 7.7"/></svg>
<span class="t" style="left:23.90px;top:267.68px;font-size:9.2px;line-height:11.04px;color:#a9ccd3;font-weight:normal;transform:scaleX(0.9297);-webkit-text-stroke:0.2px #a9ccd3;">Math</span>
<div class="sep" style="top:287.50px"></div>
<svg style="left:12.2px;top:300.80px" width="7" height="9" viewBox="0 0 7 9" fill="none" stroke="#84e1e4" stroke-width="1.45"><path d="M1.6 1.3 L4.9 4.5 L1.6 7.7"/></svg>
<span class="t" style="left:23.90px;top:300.58px;font-size:9.2px;line-height:11.04px;color:#a9ccd3;font-weight:normal;transform:scaleX(0.9362);-webkit-text-stroke:0.2px #a9ccd3;">Script</span>
<div class="sep" style="top:320.40px"></div>
<svg style="left:12.2px;top:333.70px" width="7" height="9" viewBox="0 0 7 9" fill="none" stroke="#84e1e4" stroke-width="1.45"><path d="M1.6 1.3 L4.9 4.5 L1.6 7.7"/></svg>
<span class="t" style="left:23.90px;top:333.48px;font-size:9.2px;line-height:11.04px;color:#a9ccd3;font-weight:normal;transform:scaleX(0.9494);-webkit-text-stroke:0.2px #a9ccd3;">String</span>
<div class="sep" style="top:353.30px"></div>
<svg style="left:12.2px;top:366.60px" width="7" height="9" viewBox="0 0 7 9" fill="none" stroke="#84e1e4" stroke-width="1.45"><path d="M1.6 1.3 L4.9 4.5 L1.6 7.7"/></svg>
<span class="t" style="left:23.90px;top:366.38px;font-size:9.2px;line-height:11.04px;color:#a9ccd3;font-weight:normal;transform:scaleX(0.9361);-webkit-text-stroke:0.2px #a9ccd3;">Units</span>
<div class="sep" style="top:386.20px"></div>
<span class="t" style="left:11.80px;top:404.80px;font-size:12px;line-height:14.40px;color:#e6e6e6;font-weight:normal;transform:scaleX(0.9753);-webkit-text-stroke:0.15px #e6e6e6;">Add-ons</span>
<svg style="left:144px;top:406px" width="12" height="12" viewBox="0 0 12 12" fill="none" stroke="#4690b8" stroke-width="0.7"><path d="M1 6.2h10.4 M6.2 1v10.4"/></svg>
<svg style="left:12.2px;top:438.30px" width="7" height="9" viewBox="0 0 7 9" fill="none" stroke="#84e1e4" stroke-width="1.45"><path d="M1.6 1.3 L4.9 4.5 L1.6 7.7"/></svg>
<span class="t" style="left:23.90px;top:438.08px;font-size:9.2px;line-height:11.04px;color:#a9ccd3;font-weight:normal;transform:scaleX(0.9188);-webkit-text-stroke:0.2px #a9ccd3;">Autodesk</span>
<div class="sep" style="top:457.90px"></div>
<svg style="left:12.2px;top:471.10px" width="7" height="9" viewBox="0 0 7 9" fill="none" stroke="#84e1e4" stroke-width="1.45"><path d="M1.6 1.3 L4.9 4.5 L1.6 7.7"/></svg>
<span class="t" style="left:23.90px;top:470.88px;font-size:9.2px;line-height:11.04px;color:#a9ccd3;font-weight:normal;transform:scaleX(0.9021);-webkit-text-stroke:0.2px #a9ccd3;">Civil 3D - Revit</span>
<div class="sep" style="top:490.70px"></div>
<svg style="left:12.2px;top:503.70px" width="7" height="9" viewBox="0 0 7 9" fill="none" stroke="#84e1e4" stroke-width="1.45"><path d="M1.6 1.3 L4.9 4.5 L1.6 7.7"/></svg>
<span class="t" style="left:23.90px;top:503.48px;font-size:9.2px;line-height:11.04px;color:#a9ccd3;font-weight:normal;transform:scaleX(0.8968);-webkit-text-stroke:0.2px #a9ccd3;">Clockwork</span>
<div class="sep" style="top:523.30px"></div>
</div></body></html>
